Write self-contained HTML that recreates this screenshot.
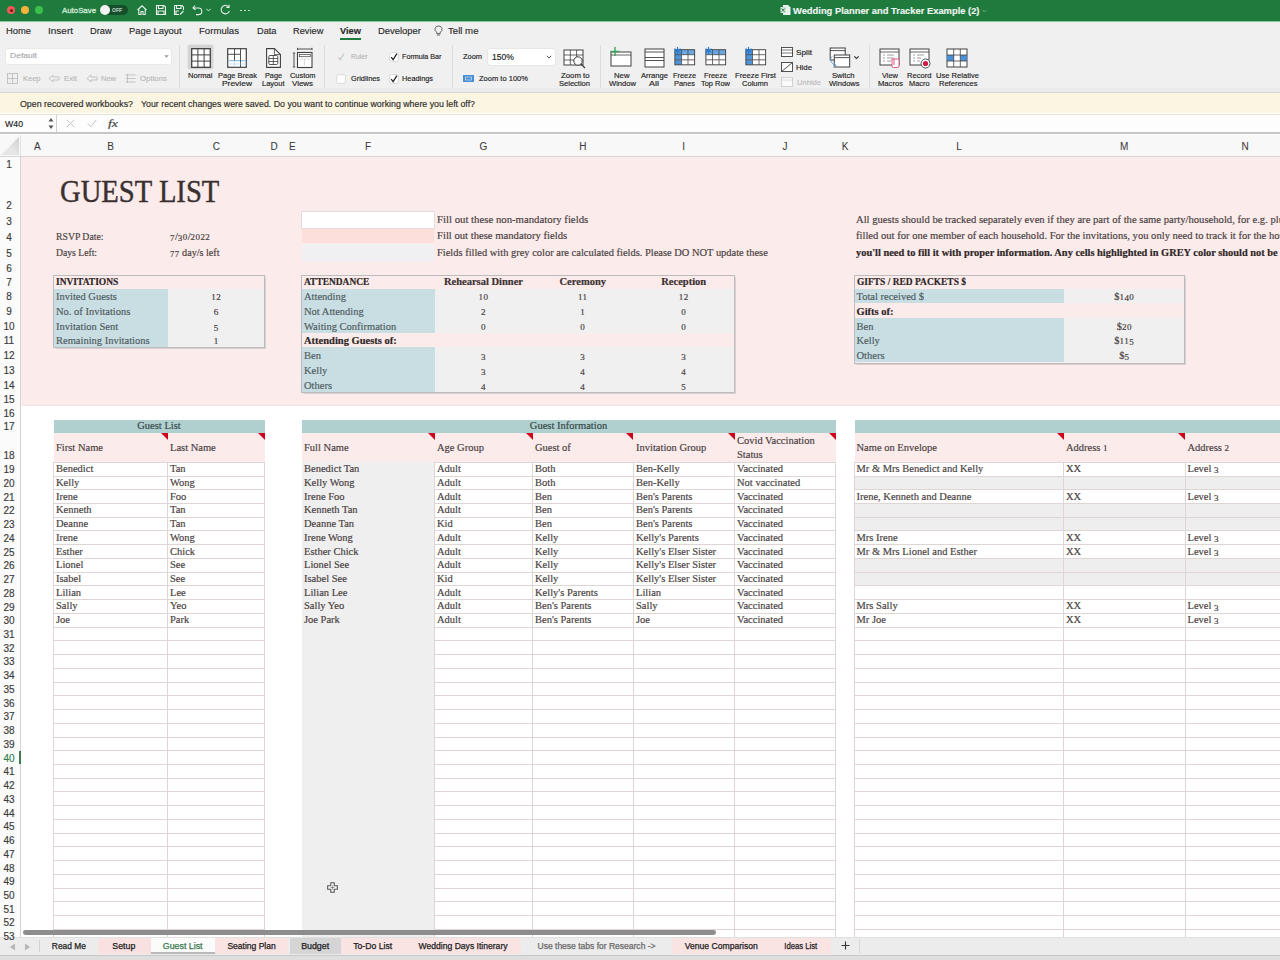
<!DOCTYPE html><html><head><meta charset="utf-8"><style>*{margin:0;padding:0;box-sizing:border-box}
html,body{width:1280px;height:960px;overflow:hidden;background:#fff;position:relative}
.a{position:absolute}
.t{position:absolute;white-space:nowrap}
svg{position:absolute;overflow:visible}
.o{font-size:0.86em;letter-spacing:0.05em}
.oa{font-size:0.88em;letter-spacing:0.03em}
.od{font-size:0.86em;letter-spacing:0.05em;position:relative;top:0.12em}
</style></head><body><div class="a" style="left:0.00px;top:0.00px;width:1280.00px;height:21.00px;background:#1f7a3e;"></div><div class="a" style="left:0.00px;top:21.00px;width:1280.00px;height:1.00px;background:#8cc79c;"></div><div class="a" style="left:7px;top:6px;width:8px;height:8px;border-radius:50%;background:#ee5a5a"></div><div class="a" style="left:21px;top:6px;width:8px;height:8px;border-radius:50%;background:#f6b33a"></div><div class="a" style="left:35px;top:6px;width:8px;height:8px;border-radius:50%;background:#3bc14a"></div><div class="a" style="left:9.5px;top:8.5px;width:3px;height:3px;border-radius:50%;background:#7a1010"></div><div class="a" style="left:100px;top:5px;width:28px;height:10px;border-radius:5px;background:#154f2b"></div><div class="a" style="left:100px;top:5px;width:10px;height:10px;border-radius:50%;background:#f4f4f4"></div><svg style="left:136px;top:4px" width="12" height="12" viewBox="0 0 12 12"><path d="M1.5 6 L6 1.8 L10.5 6 M2.8 4.8 V10.5 H5 V7.5 H7 V10.5 H9.2 V4.8" fill="none" stroke="#e6efe8" stroke-width="1.1"/></svg><svg style="left:155px;top:4px" width="12" height="12" viewBox="0 0 12 12"><path d="M1.5 1.5 H9 L10.5 3 V10.5 H1.5 Z M3.5 1.5 V4.5 H8 V1.5 M3 10.5 V7 H9 V10.5" fill="none" stroke="#e6efe8" stroke-width="1.1"/></svg><svg style="left:173px;top:4px" width="12" height="12" viewBox="0 0 12 12"><path d="M1.5 1.5 H9 L10.5 3 V6 M1.5 1.5 V10.5 H6 M3.5 1.5 V4.5 H8 V1.5 M3 10.5 V7 H6 M7 10.5 L10.5 7" fill="none" stroke="#e6efe8" stroke-width="1.1"/></svg><svg style="left:192px;top:4px" width="12" height="12" viewBox="0 0 12 12"><path d="M3 1.5 L1 4 L3.5 5.8 M1.3 4 H6.5 A3.3 3.3 0 0 1 6.5 10.6 H4" fill="none" stroke="#e6efe8" stroke-width="1.1"/></svg><svg style="left:206px;top:8px" width="5" height="4" viewBox="0 0 5 4"><path d="M0.5 0.8 L2.5 3 L4.5 0.8" fill="none" stroke="#e6efe8" stroke-width="0.9"/></svg><svg style="left:219px;top:4px" width="12" height="12" viewBox="0 0 12 12"><path d="M9.8 3.2 A4.2 4.2 0 1 0 10.4 6.8 M10 0.8 V3.5 H7.3" fill="none" stroke="#e6efe8" stroke-width="1.1"/></svg><div class="a" style="left:240px;top:9.5px;width:1.8px;height:1.8px;border-radius:50%;background:#e6efe8"></div><div class="a" style="left:244px;top:9.5px;width:1.8px;height:1.8px;border-radius:50%;background:#e6efe8"></div><div class="a" style="left:248px;top:9.5px;width:1.8px;height:1.8px;border-radius:50%;background:#e6efe8"></div><svg style="left:780px;top:4px" width="11" height="12" viewBox="0 0 11 12"><path d="M3 1 H8 L10.5 3.5 V11 H3 Z" fill="#e9f2ec"/><rect x="0.5" y="3" width="5.5" height="6" fill="#cfe3d5"/><path d="M1.8 4.5 L4.6 7.6 M4.6 4.5 L1.8 7.6" stroke="#1f7a3e" stroke-width="0.9"/></svg><svg style="left:982px;top:9px" width="5" height="4" viewBox="0 0 5 4"><path d="M0.5 0.8 L2.5 3 L4.5 0.8" fill="none" stroke="#7fb08e" stroke-width="0.8"/></svg><div class="a" style="left:0.00px;top:22.00px;width:1280.00px;height:66.00px;background:#f0f0f0;"></div><div class="a" style="left:0.00px;top:88.00px;width:1280.00px;height:4.30px;background:#ebebee;"></div><div class="a" style="left:0.00px;top:92.30px;width:1280.00px;height:1.00px;background:#d8d8d2;"></div><div class="a" style="left:340.00px;top:37.50px;width:21.00px;height:2.00px;background:#1f7a3e;"></div><svg style="left:434px;top:25px" width="9" height="12" viewBox="0 0 9 12"><path d="M4.5 1 A3.3 3.3 0 0 1 6.3 7.2 V8.6 H2.7 V7.2 A3.3 3.3 0 0 1 4.5 1 Z M3 10 H6" fill="none" stroke="#555" stroke-width="0.9"/></svg><div class="a" style="left:6px;top:48.5px;width:165px;height:15px;background:#fff;border-radius:2px;box-shadow:0 0 0 0.5px #e2e2e2"></div><svg style="left:164px;top:55px" width="5" height="3" viewBox="0 0 5 3"><path d="M0.3 0.3 L2.5 2.7 L4.7 0.3 Z" fill="#9a9a9a"/></svg><svg style="left:7px;top:73px" width="11" height="11" viewBox="0 0 11 11"><rect x="0.5" y="0.5" width="10" height="10" fill="none" stroke="#b9b9b9" stroke-width="0.8"/><path d="M0.5 5.5 H10.5 M5.5 0.5 V10.5" stroke="#b9b9b9" stroke-width="0.8"/></svg><svg style="left:48px;top:74px" width="12" height="9" viewBox="0 0 12 9"><path d="M1 4.5 L5 1 V3 H11 V6 H5 V8 Z" fill="none" stroke="#b9b9b9" stroke-width="0.8"/></svg><svg style="left:86px;top:74px" width="12" height="9" viewBox="0 0 12 9"><path d="M1 4.5 L5 1 V3 H11 V6 H5 V8 Z" fill="none" stroke="#b9b9b9" stroke-width="0.8"/></svg><svg style="left:125px;top:74px" width="11" height="9" viewBox="0 0 11 9"><path d="M0.5 1 H10.5 M0.5 4.5 H10.5 M0.5 8 H10.5 M2.5 0 V9" stroke="#b9b9b9" stroke-width="0.8"/></svg><div class="a" style="left:179.00px;top:45.00px;width:1.00px;height:43.00px;background:#dcdcdc;"></div><div class="a" style="left:188.2px;top:45.2px;width:25px;height:24px;background:#d4d4d4;border-radius:2px;box-shadow:0 0 1.5px #bbb"></div><svg style="left:191px;top:48px" width="20" height="20" viewBox="0 0 20 20"><rect x="0.7" y="0.7" width="18.6" height="18.6" fill="#fff" stroke="#404040" stroke-width="1.3"/><path d="M6.9 0.7 V19.3 M13.1 0.7 V19.3 M0.7 6.9 H19.3 M0.7 13.1 H19.3" stroke="#404040" stroke-width="1"/></svg><svg style="left:227px;top:48px" width="20" height="20" viewBox="0 0 20 20"><rect x="0.7" y="0.7" width="18.6" height="18.6" fill="#fff" stroke="#404040" stroke-width="1.2"/><path d="M0.7 12.7 H19.3" stroke="#7fb6e0" stroke-width="1"/><path d="M7.5 0.7 V12.7 M0.7 6.3 H13.5 M13.5 0.7 V19.3" stroke="#404040" stroke-width="0.9"/><path d="M7.5 12.7 V19.3 M0.7 16 H19.3" stroke="#a8d0ee" stroke-width="0.6"/></svg><svg style="left:266px;top:48px" width="15" height="20" viewBox="0 0 15 20"><path d="M0.6 0.6 H8.4 L14.4 6.6 V19.4 H0.6 Z" fill="#fff" stroke="#404040" stroke-width="1.1"/><path d="M8.4 0.6 V6.6 H14.4" fill="none" stroke="#404040" stroke-width="0.8"/><rect x="2.8" y="7.5" width="9" height="9" rx="1.2" fill="none" stroke="#404040" stroke-width="0.9"/><path d="M2.8 10.5 H11.8 M2.8 13.5 H11.8 M7.3 7.5 V16.5" stroke="#404040" stroke-width="0.8"/></svg><svg style="left:292px;top:47px" width="22" height="22" viewBox="0 0 22 22"><path d="M2 6 V20 M0.8 6 H3.2 M0.8 20 H3.2 M5.5 2 H20 M5.5 0.8 V3.2 M20 0.8 V3.2" stroke="#404040" stroke-width="0.9"/><rect x="5.5" y="5.5" width="14.5" height="15" fill="#fff" stroke="#404040" stroke-width="1.1"/><rect x="7.3" y="7.5" width="11" height="2.2" fill="none" stroke="#404040" stroke-width="0.7"/><path d="M7.5 12 H18 M12.5 12 V18.5" stroke="#bbb" stroke-width="0.5"/></svg><div class="a" style="left:324.00px;top:45.00px;width:1.00px;height:43.00px;background:#dcdcdc;"></div><svg style="left:335.5px;top:51.5px" width="10" height="10" viewBox="0 0 10 10"><path d="M2.2 5.2 L4.1 7.6 L7.9 1.6" fill="none" stroke="#c8c8c8" stroke-width="1.2"/></svg><svg style="left:388.5px;top:51.5px" width="10" height="10" viewBox="0 0 10 10"><rect x="0.6" y="0.6" width="8.8" height="8.8" rx="1.6" fill="#fdfdfd" stroke="#d0d0d0" stroke-width="0.7"/><path d="M2.2 5.2 L4.1 7.6 L7.9 1.6" fill="none" stroke="#222" stroke-width="1.2"/></svg><svg style="left:335.5px;top:73.5px" width="10" height="10" viewBox="0 0 10 10"><rect x="0.6" y="0.6" width="8.8" height="8.8" rx="1.6" fill="#fdfdfd" stroke="#d0d0d0" stroke-width="0.7"/></svg><svg style="left:388.5px;top:73.5px" width="10" height="10" viewBox="0 0 10 10"><rect x="0.6" y="0.6" width="8.8" height="8.8" rx="1.6" fill="#fdfdfd" stroke="#d0d0d0" stroke-width="0.7"/><path d="M2.2 5.2 L4.1 7.6 L7.9 1.6" fill="none" stroke="#222" stroke-width="1.2"/></svg><div class="a" style="left:452.00px;top:45.00px;width:1.00px;height:43.00px;background:#dcdcdc;"></div><div class="a" style="left:487.5px;top:48.5px;width:67.5px;height:16px;background:#fff;border-radius:2px;box-shadow:0 0 0 0.5px #dedede"></div><svg style="left:546px;top:55px" width="6" height="4" viewBox="0 0 6 4"><path d="M0.8 0.8 L3 3 L5.2 0.8" fill="none" stroke="#444" stroke-width="0.9"/></svg><svg style="left:463px;top:75px" width="11" height="7" viewBox="0 0 11 7"><rect x="0" y="0" width="11" height="7" fill="#4a90d6"/><rect x="2.5" y="2" width="6" height="3" fill="none" stroke="#cfe3f6" stroke-width="0.7"/></svg><svg style="left:563px;top:49px" width="24" height="20" viewBox="0 0 24 20"><rect x="1" y="1" width="19" height="15" fill="#fff" stroke="#404040" stroke-width="1"/><path d="M1 6 H20 M1 11 H20 M7.3 1 V16 M13.6 1 V16" stroke="#404040" stroke-width="0.8"/><circle cx="15" cy="12" r="4.2" fill="#fff" stroke="#404040" stroke-width="1"/><path d="M18 15 L22 19" stroke="#404040" stroke-width="1.3"/></svg><div class="a" style="left:599.50px;top:45.00px;width:1.00px;height:43.00px;background:#dcdcdc;"></div><svg style="left:610px;top:47px" width="22" height="20" viewBox="0 0 22 20"><rect x="1" y="5" width="20" height="14" fill="#fff" stroke="#404040" stroke-width="1"/><path d="M1 8 H21" stroke="#404040" stroke-width="0.8"/><path d="M5 0 V9 M0.5 4.5 H9.5" stroke="#3ba55c" stroke-width="1.4"/></svg><svg style="left:644px;top:48px" width="21" height="20" viewBox="0 0 21 20"><rect x="1" y="1" width="19" height="18" fill="#fff" stroke="#404040" stroke-width="1"/><path d="M1 4 H20 M1 9.5 H20 M1 12.5 H20" stroke="#404040" stroke-width="0.9"/></svg><svg style="left:673px;top:46px" width="24" height="22" viewBox="0 0 24 22"><rect x="1.9" y="3.7" width="19.7" height="15.1" fill="#fff"/><rect x="8.5" y="3.7" width="13.1" height="5" fill="#6aa8e4"/><rect x="1.9" y="3.7" width="6.6" height="15.1" fill="#4d94da"/><rect x="1.9" y="3.7" width="19.7" height="15.1" fill="none" stroke="#4a4a4a" stroke-width="1"/><path d="M1.9 8.7 H21.6 M1.9 13.8 H21.6 M8.5 3.7 V18.8 M15 3.7 V18.8" stroke="#4a4a4a" stroke-width="0.8"/><path d="M1.9 13.8 H21.6" stroke="#b48a8a" stroke-width="0.5" opacity="0.5"/><path d="M4.5 1 V8.2 M1.4 2.8 L7.6 6.4 M1.4 6.4 L7.6 2.8" stroke="#2a7bd0" stroke-width="1.2"/></svg><svg style="left:703.5px;top:46px" width="24" height="22" viewBox="0 0 24 22"><rect x="1.9" y="3.7" width="19.7" height="15.1" fill="#fff"/><rect x="1.9" y="3.7" width="19.7" height="5" fill="#6aa8e4"/><rect x="1.9" y="3.7" width="19.7" height="15.1" fill="none" stroke="#4a4a4a" stroke-width="1"/><path d="M1.9 8.7 H21.6 M1.9 13.8 H21.6 M8.5 3.7 V18.8 M15 3.7 V18.8" stroke="#4a4a4a" stroke-width="0.8"/><path d="M1.9 13.8 H21.6" stroke="#b48a8a" stroke-width="0.5" opacity="0.5"/><path d="M4.5 1 V8.2 M1.4 2.8 L7.6 6.4 M1.4 6.4 L7.6 2.8" stroke="#2a7bd0" stroke-width="1.2"/></svg><svg style="left:744px;top:46px" width="24" height="22" viewBox="0 0 24 22"><rect x="1.9" y="3.7" width="19.7" height="15.1" fill="#fff"/><rect x="1.9" y="3.7" width="6.6" height="15.1" fill="#4d94da"/><rect x="1.9" y="3.7" width="19.7" height="15.1" fill="none" stroke="#4a4a4a" stroke-width="1"/><path d="M1.9 8.7 H21.6 M1.9 13.8 H21.6 M8.5 3.7 V18.8 M15 3.7 V18.8" stroke="#4a4a4a" stroke-width="0.8"/><path d="M1.9 13.8 H21.6" stroke="#b48a8a" stroke-width="0.5" opacity="0.5"/><path d="M4.5 1 V8.2 M1.4 2.8 L7.6 6.4 M1.4 6.4 L7.6 2.8" stroke="#2a7bd0" stroke-width="1.2"/></svg><svg style="left:781px;top:47px" width="12" height="10" viewBox="0 0 12 10"><rect x="0.5" y="0.5" width="11" height="9" fill="#fff" stroke="#404040" stroke-width="0.9"/><path d="M0.5 3 H11.5 M0.5 6 H11.5" stroke="#404040" stroke-width="0.7"/></svg><svg style="left:781px;top:62px" width="12" height="10" viewBox="0 0 12 10"><rect x="0.5" y="0.5" width="11" height="9" fill="#fff" stroke="#404040" stroke-width="0.9"/><path d="M0.5 9.5 L11.5 0.5" stroke="#404040" stroke-width="0.9"/></svg><svg style="left:781px;top:77px" width="12" height="10" viewBox="0 0 12 10"><rect x="0.5" y="0.5" width="11" height="9" fill="#fbfbfb" stroke="#cccccc" stroke-width="0.9"/><path d="M0.5 3 H11.5" stroke="#cccccc" stroke-width="0.7"/></svg><svg style="left:828px;top:46px" width="32" height="22" viewBox="0 0 32 22"><rect x="2.2" y="2" width="15" height="12" fill="#fff" stroke="#404040" stroke-width="1"/><path d="M2.2 4.6 H17.2" stroke="#404040" stroke-width="0.9"/><rect x="6.3" y="9" width="15.4" height="12" fill="#fff" stroke="#404040" stroke-width="1"/><path d="M6.3 11.6 H21.7" stroke="#404040" stroke-width="0.9"/><path d="M4.2 10.5 C1.6 12.5 2.2 17.5 7.8 19.5 M6.2 17.3 L8 19.6 L5.6 21" fill="none" stroke="#6b9cc8" stroke-width="1"/><path d="M26.3 10.3 L28.5 12.5 L30.7 10.3" fill="none" stroke="#333" stroke-width="1.1"/></svg><div class="a" style="left:868.50px;top:45.00px;width:1.00px;height:43.00px;background:#dcdcdc;"></div><svg style="left:879px;top:48px" width="22" height="20" viewBox="0 0 22 20"><rect x="1" y="1" width="19" height="16" fill="#fff" stroke="#404040" stroke-width="1"/><path d="M1 4 H20" stroke="#404040" stroke-width="0.8"/><path d="M4 7 H6 M8 7 H15 M4 10 H6 M8 10 H15 M4 13 H6 M8 13 H12" stroke="#777" stroke-width="0.7"/><path d="M13 11 H20 V18 A1.5 1.5 0 0 1 18.5 19.5 H14.5 A1.5 1.5 0 0 1 13 18 Z M15 11 V17" fill="#fff" stroke="#d9477a" stroke-width="0.9"/></svg><svg style="left:909px;top:48px" width="22" height="21" viewBox="0 0 22 21"><rect x="1" y="1" width="19" height="16" fill="#fff" stroke="#404040" stroke-width="1"/><path d="M1 4 H20" stroke="#404040" stroke-width="0.8"/><path d="M4 7 H6 M8 7 H15 M4 10 H6 M8 10 H12 M4 13 H6 M8 13 H11" stroke="#777" stroke-width="0.7"/><circle cx="16.5" cy="15.5" r="4.5" fill="#fff" stroke="#404040" stroke-width="0.9"/><circle cx="16.5" cy="15.5" r="2.6" fill="#d11a4a"/></svg><svg style="left:946px;top:47.5px" width="22" height="20" viewBox="0 0 22 20"><rect x="1" y="1" width="20" height="18" fill="#fff" stroke="#404040" stroke-width="1"/><rect x="1" y="7" width="6.7" height="6" fill="#4a90d6"/><rect x="14.3" y="7" width="6.7" height="6" fill="#4a90d6"/><path d="M1 7 H21 M1 13 H21 M7.7 1 V19 M14.3 1 V19" stroke="#404040" stroke-width="0.8"/></svg><div class="a" style="left:0.00px;top:93.30px;width:1280.00px;height:20.20px;background:#fcf5e2;"></div><div class="a" style="left:0.00px;top:113.50px;width:1280.00px;height:1.00px;background:#e3e2d2;"></div><div class="a" style="left:0.00px;top:114.50px;width:1280.00px;height:18.00px;background:#fdfdfd;"></div><div class="a" style="left:0.00px;top:132.30px;width:1280.00px;height:2.20px;background:#c6c6c6;"></div><div class="a" style="left:56.00px;top:114.50px;width:1.00px;height:18.00px;background:#d0d0d0;"></div><svg style="left:48px;top:117px" width="6" height="13" viewBox="0 0 6 13"><path d="M0.5 4.5 L3 1 L5.5 4.5 Z M0.5 8.5 L3 12 L5.5 8.5 Z" fill="#555"/></svg><svg style="left:66px;top:119px" width="9" height="9" viewBox="0 0 9 9"><path d="M0.8 0.8 L8.2 8.2 M8.2 0.8 L0.8 8.2" stroke="#c4c4c4" stroke-width="1"/></svg><svg style="left:86.5px;top:119px" width="10" height="9" viewBox="0 0 10 9"><path d="M0.8 4.5 L3.8 7.8 L9.2 1" fill="none" stroke="#c4c4c4" stroke-width="1"/></svg><div class="a" style="left:0.00px;top:134.50px;width:1280.00px;height:21.00px;background:#f8f8f8;"></div><svg style="left:0px;top:134.5px" width="20" height="21" viewBox="0 0 20 21"><defs><linearGradient id="sg" x1="0" y1="1" x2="1" y2="0"><stop offset="0.45" stop-color="#e6e6e6"/><stop offset="1" stop-color="#cfcfcf"/></linearGradient></defs><path d="M1 20 L19 2 V20 Z" fill="url(#sg)"/></svg><div class="a" style="left:20.00px;top:134.50px;width:1.00px;height:21.00px;background:#e2e2e2;"></div><div class="a" style="left:21.00px;top:155.50px;width:1259.00px;height:781.50px;background:#ffffff;"></div><div class="a" style="left:21.00px;top:155.50px;width:1259.00px;height:250.00px;background:#fbebeb;"></div><div class="a" style="left:21.00px;top:404.50px;width:1259.00px;height:1.20px;background:#f6e2e2;"></div><div class="a" style="left:302.00px;top:212.00px;width:131.50px;height:16.00px;background:#ffffff;box-shadow:0 0 0 0.8px #e2d6d6"></div><div class="a" style="left:302.00px;top:228.50px;width:131.50px;height:14.50px;background:#fcdfda;"></div><div class="a" style="left:302.00px;top:244.00px;width:131.50px;height:18.00px;background:#f0eff2;"></div><div class="a" style="left:53.50px;top:288.50px;width:211.50px;height:58.80px;background:#f0f0f0;"></div><div class="a" style="left:53.50px;top:288.50px;width:114.00px;height:58.80px;background:#c9dee3;"></div><div class="a" style="left:53.00px;top:274.50px;width:212.00px;height:73.50px;border:1px solid #b9bdbd;box-shadow:0.5px 0.5px 1px rgba(0,0,0,0.12)"></div><div class="a" style="left:301.50px;top:288.50px;width:433.00px;height:44.10px;background:#f0f0f0;"></div><div class="a" style="left:301.50px;top:288.50px;width:133.00px;height:44.10px;background:#c9dee3;"></div><div class="a" style="left:301.50px;top:347.30px;width:433.00px;height:45.00px;background:#f0f0f0;"></div><div class="a" style="left:301.50px;top:347.30px;width:133.00px;height:45.00px;background:#c9dee3;"></div><div class="a" style="left:301.00px;top:274.50px;width:434.00px;height:118.30px;border:1px solid #b9bdbd;box-shadow:0.5px 0.5px 1px rgba(0,0,0,0.12)"></div><div class="a" style="left:854.50px;top:288.50px;width:330.50px;height:14.70px;background:#f0f0f0;"></div><div class="a" style="left:854.50px;top:288.50px;width:209.00px;height:14.70px;background:#c9dee3;"></div><div class="a" style="left:854.50px;top:317.90px;width:330.50px;height:44.40px;background:#f0f0f0;"></div><div class="a" style="left:854.50px;top:317.90px;width:209.00px;height:44.40px;background:#c9dee3;"></div><div class="a" style="left:854.00px;top:274.50px;width:331.00px;height:89.00px;border:1px solid #b9bdbd;box-shadow:0.5px 0.5px 1px rgba(0,0,0,0.12)"></div><div class="a" style="left:53.50px;top:419.80px;width:211.00px;height:13.20px;background:#b0cfcf;"></div><div class="a" style="left:301.50px;top:419.80px;width:534.00px;height:13.20px;background:#b0cfcf;"></div><div class="a" style="left:854.50px;top:419.80px;width:425.50px;height:13.20px;background:#b0cfcf;"></div><div class="a" style="left:53.50px;top:433.00px;width:211.00px;height:29.30px;background:#fcebeb;"></div><div class="a" style="left:301.50px;top:433.00px;width:534.00px;height:29.30px;background:#fcebeb;"></div><div class="a" style="left:854.50px;top:433.00px;width:425.50px;height:29.30px;background:#fcebeb;"></div><svg style="left:160.50px;top:433.30px" width="7" height="7" viewBox="0 0 7 7"><path d="M0 0 H7 V7 Z" fill="#d0021b"/></svg><svg style="left:257.50px;top:433.30px" width="7" height="7" viewBox="0 0 7 7"><path d="M0 0 H7 V7 Z" fill="#d0021b"/></svg><svg style="left:427.50px;top:433.30px" width="7" height="7" viewBox="0 0 7 7"><path d="M0 0 H7 V7 Z" fill="#d0021b"/></svg><svg style="left:525.50px;top:433.30px" width="7" height="7" viewBox="0 0 7 7"><path d="M0 0 H7 V7 Z" fill="#d0021b"/></svg><svg style="left:626.00px;top:433.30px" width="7" height="7" viewBox="0 0 7 7"><path d="M0 0 H7 V7 Z" fill="#d0021b"/></svg><svg style="left:727.50px;top:433.30px" width="7" height="7" viewBox="0 0 7 7"><path d="M0 0 H7 V7 Z" fill="#d0021b"/></svg><svg style="left:828.50px;top:433.30px" width="7" height="7" viewBox="0 0 7 7"><path d="M0 0 H7 V7 Z" fill="#d0021b"/></svg><svg style="left:1056.50px;top:433.30px" width="7" height="7" viewBox="0 0 7 7"><path d="M0 0 H7 V7 Z" fill="#d0021b"/></svg><svg style="left:1178.00px;top:433.30px" width="7" height="7" viewBox="0 0 7 7"><path d="M0 0 H7 V7 Z" fill="#d0021b"/></svg><div class="a" style="left:301.50px;top:462.30px;width:133.00px;height:474.70px;background:#efefef;"></div><div class="a" style="left:854.50px;top:476.04px;width:425.50px;height:13.74px;background:#eeeeee;"></div><div class="a" style="left:854.50px;top:503.51px;width:425.50px;height:13.74px;background:#eeeeee;"></div><div class="a" style="left:854.50px;top:517.24px;width:425.50px;height:13.74px;background:#eeeeee;"></div><div class="a" style="left:854.50px;top:558.45px;width:425.50px;height:13.74px;background:#eeeeee;"></div><div class="a" style="left:854.50px;top:572.19px;width:425.50px;height:13.74px;background:#eeeeee;"></div><div class="a" style="left:53.50px;top:461.80px;width:211.00px;height:1.00px;background:#e0d5d5;"></div><div class="a" style="left:434.50px;top:461.80px;width:401.00px;height:1.00px;background:#e0d5d5;"></div><div class="a" style="left:854.50px;top:461.80px;width:425.50px;height:1.00px;background:#e0d5d5;"></div><div class="a" style="left:53.50px;top:475.54px;width:211.00px;height:1.00px;background:#e0d5d5;"></div><div class="a" style="left:434.50px;top:475.54px;width:401.00px;height:1.00px;background:#e0d5d5;"></div><div class="a" style="left:854.50px;top:475.54px;width:425.50px;height:1.00px;background:#e0d5d5;"></div><div class="a" style="left:53.50px;top:489.27px;width:211.00px;height:1.00px;background:#e0d5d5;"></div><div class="a" style="left:434.50px;top:489.27px;width:401.00px;height:1.00px;background:#e0d5d5;"></div><div class="a" style="left:854.50px;top:489.27px;width:425.50px;height:1.00px;background:#e0d5d5;"></div><div class="a" style="left:53.50px;top:503.01px;width:211.00px;height:1.00px;background:#e0d5d5;"></div><div class="a" style="left:434.50px;top:503.01px;width:401.00px;height:1.00px;background:#e0d5d5;"></div><div class="a" style="left:854.50px;top:503.01px;width:425.50px;height:1.00px;background:#e0d5d5;"></div><div class="a" style="left:53.50px;top:516.74px;width:211.00px;height:1.00px;background:#e0d5d5;"></div><div class="a" style="left:434.50px;top:516.74px;width:401.00px;height:1.00px;background:#e0d5d5;"></div><div class="a" style="left:854.50px;top:516.74px;width:425.50px;height:1.00px;background:#e0d5d5;"></div><div class="a" style="left:53.50px;top:530.48px;width:211.00px;height:1.00px;background:#e0d5d5;"></div><div class="a" style="left:434.50px;top:530.48px;width:401.00px;height:1.00px;background:#e0d5d5;"></div><div class="a" style="left:854.50px;top:530.48px;width:425.50px;height:1.00px;background:#e0d5d5;"></div><div class="a" style="left:53.50px;top:544.22px;width:211.00px;height:1.00px;background:#e0d5d5;"></div><div class="a" style="left:434.50px;top:544.22px;width:401.00px;height:1.00px;background:#e0d5d5;"></div><div class="a" style="left:854.50px;top:544.22px;width:425.50px;height:1.00px;background:#e0d5d5;"></div><div class="a" style="left:53.50px;top:557.95px;width:211.00px;height:1.00px;background:#e0d5d5;"></div><div class="a" style="left:434.50px;top:557.95px;width:401.00px;height:1.00px;background:#e0d5d5;"></div><div class="a" style="left:854.50px;top:557.95px;width:425.50px;height:1.00px;background:#e0d5d5;"></div><div class="a" style="left:53.50px;top:571.69px;width:211.00px;height:1.00px;background:#e0d5d5;"></div><div class="a" style="left:434.50px;top:571.69px;width:401.00px;height:1.00px;background:#e0d5d5;"></div><div class="a" style="left:854.50px;top:571.69px;width:425.50px;height:1.00px;background:#e0d5d5;"></div><div class="a" style="left:53.50px;top:585.42px;width:211.00px;height:1.00px;background:#e0d5d5;"></div><div class="a" style="left:434.50px;top:585.42px;width:401.00px;height:1.00px;background:#e0d5d5;"></div><div class="a" style="left:854.50px;top:585.42px;width:425.50px;height:1.00px;background:#e0d5d5;"></div><div class="a" style="left:53.50px;top:599.16px;width:211.00px;height:1.00px;background:#e0d5d5;"></div><div class="a" style="left:434.50px;top:599.16px;width:401.00px;height:1.00px;background:#e0d5d5;"></div><div class="a" style="left:854.50px;top:599.16px;width:425.50px;height:1.00px;background:#e0d5d5;"></div><div class="a" style="left:53.50px;top:612.90px;width:211.00px;height:1.00px;background:#e0d5d5;"></div><div class="a" style="left:434.50px;top:612.90px;width:401.00px;height:1.00px;background:#e0d5d5;"></div><div class="a" style="left:854.50px;top:612.90px;width:425.50px;height:1.00px;background:#e0d5d5;"></div><div class="a" style="left:53.50px;top:626.63px;width:211.00px;height:1.00px;background:#e0d5d5;"></div><div class="a" style="left:434.50px;top:626.63px;width:401.00px;height:1.00px;background:#e0d5d5;"></div><div class="a" style="left:854.50px;top:626.63px;width:425.50px;height:1.00px;background:#e0d5d5;"></div><div class="a" style="left:53.50px;top:640.37px;width:211.00px;height:1.00px;background:#e0d5d5;"></div><div class="a" style="left:434.50px;top:640.37px;width:401.00px;height:1.00px;background:#e0d5d5;"></div><div class="a" style="left:854.50px;top:640.37px;width:425.50px;height:1.00px;background:#e0d5d5;"></div><div class="a" style="left:53.50px;top:654.10px;width:211.00px;height:1.00px;background:#e0d5d5;"></div><div class="a" style="left:434.50px;top:654.10px;width:401.00px;height:1.00px;background:#e0d5d5;"></div><div class="a" style="left:854.50px;top:654.10px;width:425.50px;height:1.00px;background:#e0d5d5;"></div><div class="a" style="left:53.50px;top:667.84px;width:211.00px;height:1.00px;background:#e0d5d5;"></div><div class="a" style="left:434.50px;top:667.84px;width:401.00px;height:1.00px;background:#e0d5d5;"></div><div class="a" style="left:854.50px;top:667.84px;width:425.50px;height:1.00px;background:#e0d5d5;"></div><div class="a" style="left:53.50px;top:681.58px;width:211.00px;height:1.00px;background:#e0d5d5;"></div><div class="a" style="left:434.50px;top:681.58px;width:401.00px;height:1.00px;background:#e0d5d5;"></div><div class="a" style="left:854.50px;top:681.58px;width:425.50px;height:1.00px;background:#e0d5d5;"></div><div class="a" style="left:53.50px;top:695.31px;width:211.00px;height:1.00px;background:#e0d5d5;"></div><div class="a" style="left:434.50px;top:695.31px;width:401.00px;height:1.00px;background:#e0d5d5;"></div><div class="a" style="left:854.50px;top:695.31px;width:425.50px;height:1.00px;background:#e0d5d5;"></div><div class="a" style="left:53.50px;top:709.05px;width:211.00px;height:1.00px;background:#e0d5d5;"></div><div class="a" style="left:434.50px;top:709.05px;width:401.00px;height:1.00px;background:#e0d5d5;"></div><div class="a" style="left:854.50px;top:709.05px;width:425.50px;height:1.00px;background:#e0d5d5;"></div><div class="a" style="left:53.50px;top:722.78px;width:211.00px;height:1.00px;background:#e0d5d5;"></div><div class="a" style="left:434.50px;top:722.78px;width:401.00px;height:1.00px;background:#e0d5d5;"></div><div class="a" style="left:854.50px;top:722.78px;width:425.50px;height:1.00px;background:#e0d5d5;"></div><div class="a" style="left:53.50px;top:736.52px;width:211.00px;height:1.00px;background:#e0d5d5;"></div><div class="a" style="left:434.50px;top:736.52px;width:401.00px;height:1.00px;background:#e0d5d5;"></div><div class="a" style="left:854.50px;top:736.52px;width:425.50px;height:1.00px;background:#e0d5d5;"></div><div class="a" style="left:53.50px;top:750.26px;width:211.00px;height:1.00px;background:#e0d5d5;"></div><div class="a" style="left:434.50px;top:750.26px;width:401.00px;height:1.00px;background:#e0d5d5;"></div><div class="a" style="left:854.50px;top:750.26px;width:425.50px;height:1.00px;background:#e0d5d5;"></div><div class="a" style="left:53.50px;top:763.99px;width:211.00px;height:1.00px;background:#e0d5d5;"></div><div class="a" style="left:434.50px;top:763.99px;width:401.00px;height:1.00px;background:#e0d5d5;"></div><div class="a" style="left:854.50px;top:763.99px;width:425.50px;height:1.00px;background:#e0d5d5;"></div><div class="a" style="left:53.50px;top:777.73px;width:211.00px;height:1.00px;background:#e0d5d5;"></div><div class="a" style="left:434.50px;top:777.73px;width:401.00px;height:1.00px;background:#e0d5d5;"></div><div class="a" style="left:854.50px;top:777.73px;width:425.50px;height:1.00px;background:#e0d5d5;"></div><div class="a" style="left:53.50px;top:791.46px;width:211.00px;height:1.00px;background:#e0d5d5;"></div><div class="a" style="left:434.50px;top:791.46px;width:401.00px;height:1.00px;background:#e0d5d5;"></div><div class="a" style="left:854.50px;top:791.46px;width:425.50px;height:1.00px;background:#e0d5d5;"></div><div class="a" style="left:53.50px;top:805.20px;width:211.00px;height:1.00px;background:#e0d5d5;"></div><div class="a" style="left:434.50px;top:805.20px;width:401.00px;height:1.00px;background:#e0d5d5;"></div><div class="a" style="left:854.50px;top:805.20px;width:425.50px;height:1.00px;background:#e0d5d5;"></div><div class="a" style="left:53.50px;top:818.94px;width:211.00px;height:1.00px;background:#e0d5d5;"></div><div class="a" style="left:434.50px;top:818.94px;width:401.00px;height:1.00px;background:#e0d5d5;"></div><div class="a" style="left:854.50px;top:818.94px;width:425.50px;height:1.00px;background:#e0d5d5;"></div><div class="a" style="left:53.50px;top:832.67px;width:211.00px;height:1.00px;background:#e0d5d5;"></div><div class="a" style="left:434.50px;top:832.67px;width:401.00px;height:1.00px;background:#e0d5d5;"></div><div class="a" style="left:854.50px;top:832.67px;width:425.50px;height:1.00px;background:#e0d5d5;"></div><div class="a" style="left:53.50px;top:846.41px;width:211.00px;height:1.00px;background:#e0d5d5;"></div><div class="a" style="left:434.50px;top:846.41px;width:401.00px;height:1.00px;background:#e0d5d5;"></div><div class="a" style="left:854.50px;top:846.41px;width:425.50px;height:1.00px;background:#e0d5d5;"></div><div class="a" style="left:53.50px;top:860.14px;width:211.00px;height:1.00px;background:#e0d5d5;"></div><div class="a" style="left:434.50px;top:860.14px;width:401.00px;height:1.00px;background:#e0d5d5;"></div><div class="a" style="left:854.50px;top:860.14px;width:425.50px;height:1.00px;background:#e0d5d5;"></div><div class="a" style="left:53.50px;top:873.88px;width:211.00px;height:1.00px;background:#e0d5d5;"></div><div class="a" style="left:434.50px;top:873.88px;width:401.00px;height:1.00px;background:#e0d5d5;"></div><div class="a" style="left:854.50px;top:873.88px;width:425.50px;height:1.00px;background:#e0d5d5;"></div><div class="a" style="left:53.50px;top:887.62px;width:211.00px;height:1.00px;background:#e0d5d5;"></div><div class="a" style="left:434.50px;top:887.62px;width:401.00px;height:1.00px;background:#e0d5d5;"></div><div class="a" style="left:854.50px;top:887.62px;width:425.50px;height:1.00px;background:#e0d5d5;"></div><div class="a" style="left:53.50px;top:901.35px;width:211.00px;height:1.00px;background:#e0d5d5;"></div><div class="a" style="left:434.50px;top:901.35px;width:401.00px;height:1.00px;background:#e0d5d5;"></div><div class="a" style="left:854.50px;top:901.35px;width:425.50px;height:1.00px;background:#e0d5d5;"></div><div class="a" style="left:53.50px;top:915.09px;width:211.00px;height:1.00px;background:#e0d5d5;"></div><div class="a" style="left:434.50px;top:915.09px;width:401.00px;height:1.00px;background:#e0d5d5;"></div><div class="a" style="left:854.50px;top:915.09px;width:425.50px;height:1.00px;background:#e0d5d5;"></div><div class="a" style="left:53.50px;top:928.82px;width:211.00px;height:1.00px;background:#e0d5d5;"></div><div class="a" style="left:434.50px;top:928.82px;width:401.00px;height:1.00px;background:#e0d5d5;"></div><div class="a" style="left:854.50px;top:928.82px;width:425.50px;height:1.00px;background:#e0d5d5;"></div><div class="a" style="left:53.00px;top:462.30px;width:1.00px;height:474.70px;background:#e0d5d5;"></div><div class="a" style="left:167.00px;top:462.30px;width:1.00px;height:474.70px;background:#e0d5d5;"></div><div class="a" style="left:264.00px;top:462.30px;width:1.00px;height:474.70px;background:#e0d5d5;"></div><div class="a" style="left:434.00px;top:462.30px;width:1.00px;height:474.70px;background:#e0d5d5;"></div><div class="a" style="left:532.00px;top:462.30px;width:1.00px;height:474.70px;background:#e0d5d5;"></div><div class="a" style="left:632.50px;top:462.30px;width:1.00px;height:474.70px;background:#e0d5d5;"></div><div class="a" style="left:734.00px;top:462.30px;width:1.00px;height:474.70px;background:#e0d5d5;"></div><div class="a" style="left:835.00px;top:462.30px;width:1.00px;height:474.70px;background:#e0d5d5;"></div><div class="a" style="left:854.00px;top:462.30px;width:1.00px;height:474.70px;background:#e0d5d5;"></div><div class="a" style="left:1063.00px;top:462.30px;width:1.00px;height:474.70px;background:#e0d5d5;"></div><div class="a" style="left:1184.50px;top:462.30px;width:1.00px;height:474.70px;background:#e0d5d5;"></div><div class="a" style="left:0.00px;top:155.50px;width:1280.00px;height:1.50px;background:#dcd3d6;"></div><div class="a" style="left:0.00px;top:157.00px;width:20.00px;height:780.00px;background:#fbfbfb;"></div><div class="a" style="left:20.00px;top:157.00px;width:1.00px;height:780.00px;background:#d4d4d4;"></div><div class="a" style="left:19.00px;top:750.76px;width:2.20px;height:13.74px;background:#3c7a58;"></div><div class="a" style="left:22.5px;top:930.2px;width:693px;height:4.8px;border-radius:2.4px;background:#8d8d8d"></div><div class="a" style="left:0.00px;top:937.00px;width:1280.00px;height:17.50px;background:#ececec;"></div><div class="a" style="left:0.00px;top:937.00px;width:1280.00px;height:0.80px;background:#e0e0e0;"></div><div class="a" style="left:0.00px;top:954.50px;width:1280.00px;height:1.00px;background:#c8c8c8;"></div><div class="a" style="left:0.00px;top:955.50px;width:1280.00px;height:4.50px;background:#dedede;"></div><svg style="left:9px;top:943px" width="7" height="8" viewBox="0 0 7 8"><path d="M6 0.5 L1 4 L6 7.5 Z" fill="#b6b6b6"/></svg><svg style="left:24px;top:943px" width="7" height="8" viewBox="0 0 7 8"><path d="M1 0.5 L6 4 L1 7.5 Z" fill="#b6b6b6"/></svg><div class="a" style="left:39.00px;top:940.00px;width:0.80px;height:12.00px;background:#d2d2d2;"></div><div class="a" style="left:40.00px;top:937.80px;width:57.50px;height:16.70px;background:#ececec;"></div><div class="a" style="left:97.50px;top:937.80px;width:53.50px;height:16.70px;background:#f9e1e1;"></div><div class="a" style="left:151.00px;top:937.80px;width:64.20px;height:16.70px;background:#fbfbfb;"></div><div class="a" style="left:215.20px;top:937.80px;width:72.80px;height:16.70px;background:#f9e3e3;"></div><div class="a" style="left:290.00px;top:937.80px;width:51.00px;height:16.70px;background:#d5d5d5;"></div><div class="a" style="left:341.00px;top:937.80px;width:64.00px;height:16.70px;background:#f9e3e3;"></div><div class="a" style="left:405.00px;top:937.80px;width:116.00px;height:16.70px;background:#f9e3e3;"></div><div class="a" style="left:521.00px;top:937.80px;width:151.00px;height:16.70px;background:#ececec;"></div><div class="a" style="left:672.00px;top:937.80px;width:98.00px;height:16.70px;background:#f9e3e3;"></div><div class="a" style="left:770.00px;top:937.80px;width:61.00px;height:16.70px;background:#f9e3e3;"></div><div class="a" style="left:151.00px;top:952.30px;width:64.20px;height:1.50px;background:#b8b8b8;"></div><svg style="left:326.5px;top:881.5px" width="11" height="11" viewBox="0 0 11 11"><path d="M3.8 0.7 H7.2 V3.8 H10.3 V7.2 H7.2 V10.3 H3.8 V7.2 H0.7 V3.8 H3.8 Z" fill="#fff" stroke="#555" stroke-width="1.1"/><path d="M5.5 3.5 V7.5 M3.5 5.5 H7.5" stroke="#555" stroke-width="0.6"/></svg><svg style="left:841px;top:941px" width="9" height="9" viewBox="0 0 9 9"><path d="M4.5 0.5 V8.5 M0.5 4.5 H8.5" stroke="#333" stroke-width="1.1"/></svg><div class="a" style="left:859.00px;top:939.00px;width:0.80px;height:14.00px;background:#d8d8d8;"></div><div class="t" style="top:7.07px;font-family:'Liberation Sans', sans-serif;font-size:7.6px;line-height:7.6px;color:#cfe8d4;-webkit-text-stroke:0.15px #cfe8d4;left:62.00px;-webkit-text-stroke:0.3px #cfe8d4;"><span style="display:inline-block;transform:scaleX(1.0323);transform-origin:left">AutoSave</span></div><div class="t" style="top:7.97px;font-family:'Liberation Sans', sans-serif;font-size:5px;line-height:5px;color:#b8c8bc;font-weight:700;-webkit-text-stroke:0.15px #b8c8bc;left:112.00px;">OFF</div><div class="t" style="top:6.44px;font-family:'Liberation Sans', sans-serif;font-size:9.4px;line-height:9.4px;color:#eef5f0;font-weight:700;-webkit-text-stroke:0.15px #eef5f0;left:793.00px;"><span style="display:inline-block;transform:scaleX(0.9980);transform-origin:left">Wedding Planner and Tracker Example (2)</span></div><div class="t" style="top:26.26px;font-family:'Liberation Sans', sans-serif;font-size:9.5px;line-height:9.5px;color:#2b2b2b;-webkit-text-stroke:0.15px #2b2b2b;left:5.50px;"><span style="display:inline-block;transform:scaleX(0.9864);transform-origin:left">Home</span></div><div class="t" style="top:26.26px;font-family:'Liberation Sans', sans-serif;font-size:9.5px;line-height:9.5px;color:#2b2b2b;-webkit-text-stroke:0.15px #2b2b2b;left:48.00px;"><span style="display:inline-block;transform:scaleX(1.0519);transform-origin:left">Insert</span></div><div class="t" style="top:26.26px;font-family:'Liberation Sans', sans-serif;font-size:9.5px;line-height:9.5px;color:#2b2b2b;-webkit-text-stroke:0.15px #2b2b2b;left:90.00px;"><span style="display:inline-block;transform:scaleX(0.9787);transform-origin:left">Draw</span></div><div class="t" style="top:26.26px;font-family:'Liberation Sans', sans-serif;font-size:9.5px;line-height:9.5px;color:#2b2b2b;-webkit-text-stroke:0.15px #2b2b2b;left:129.00px;"><span style="display:inline-block;transform:scaleX(0.9858);transform-origin:left">Page Layout</span></div><div class="t" style="top:26.26px;font-family:'Liberation Sans', sans-serif;font-size:9.5px;line-height:9.5px;color:#2b2b2b;-webkit-text-stroke:0.15px #2b2b2b;left:199.00px;"><span style="display:inline-block;transform:scaleX(1.0103);transform-origin:left">Formulas</span></div><div class="t" style="top:26.26px;font-family:'Liberation Sans', sans-serif;font-size:9.5px;line-height:9.5px;color:#2b2b2b;-webkit-text-stroke:0.15px #2b2b2b;left:256.60px;"><span style="display:inline-block;transform:scaleX(0.9662);transform-origin:left">Data</span></div><div class="t" style="top:26.26px;font-family:'Liberation Sans', sans-serif;font-size:9.5px;line-height:9.5px;color:#2b2b2b;-webkit-text-stroke:0.15px #2b2b2b;left:293.00px;"><span style="display:inline-block;transform:scaleX(0.9757);transform-origin:left">Review</span></div><div class="t" style="top:26.26px;font-family:'Liberation Sans', sans-serif;font-size:9.5px;line-height:9.5px;color:#2b2b2b;font-weight:700;-webkit-text-stroke:0.15px #2b2b2b;left:340.00px;"><span style="display:inline-block;transform:scaleX(0.9775);transform-origin:left">View</span></div><div class="t" style="top:26.26px;font-family:'Liberation Sans', sans-serif;font-size:9.5px;line-height:9.5px;color:#2b2b2b;-webkit-text-stroke:0.15px #2b2b2b;left:378.00px;"><span style="display:inline-block;transform:scaleX(0.9928);transform-origin:left">Developer</span></div><div class="t" style="top:26.26px;font-family:'Liberation Sans', sans-serif;font-size:9.5px;line-height:9.5px;color:#2b2b2b;-webkit-text-stroke:0.15px #2b2b2b;left:448.00px;"><span style="display:inline-block;transform:scaleX(1.0135);transform-origin:left">Tell me</span></div><div class="t" style="top:52.23px;font-family:'Liberation Sans', sans-serif;font-size:8px;line-height:8px;color:#a8a8a8;-webkit-text-stroke:0.15px #a8a8a8;left:9.50px;"><span style="display:inline-block;transform:scaleX(1.0647);transform-origin:left">Default</span></div><div class="t" style="top:75.07px;font-family:'Liberation Sans', sans-serif;font-size:7.6px;line-height:7.6px;color:#b9b9b9;-webkit-text-stroke:0.15px #b9b9b9;left:22.50px;"><span style="display:inline-block;transform:scaleX(0.9859);transform-origin:left">Keep</span></div><div class="t" style="top:75.07px;font-family:'Liberation Sans', sans-serif;font-size:7.6px;line-height:7.6px;color:#b9b9b9;-webkit-text-stroke:0.15px #b9b9b9;left:64.00px;"><span style="display:inline-block;transform:scaleX(1.0259);transform-origin:left">Exit</span></div><div class="t" style="top:75.07px;font-family:'Liberation Sans', sans-serif;font-size:7.6px;line-height:7.6px;color:#b9b9b9;-webkit-text-stroke:0.15px #b9b9b9;left:101.00px;"><span style="display:inline-block;transform:scaleX(0.9866);transform-origin:left">New</span></div><div class="t" style="top:75.07px;font-family:'Liberation Sans', sans-serif;font-size:7.6px;line-height:7.6px;color:#b9b9b9;-webkit-text-stroke:0.15px #b9b9b9;left:140.00px;"><span style="display:inline-block;transform:scaleX(1.0316);transform-origin:left">Options</span></div><div class="t" style="top:71.57px;font-family:'Liberation Sans', sans-serif;font-size:7.6px;line-height:7.6px;color:#222;-webkit-text-stroke:0.15px #222;left:188.00px;"><span style="display:inline-block;transform:scaleX(1.0006);transform-origin:left">Normal</span></div><div class="t" style="top:71.57px;font-family:'Liberation Sans', sans-serif;font-size:7.6px;line-height:7.6px;color:#222;-webkit-text-stroke:0.15px #222;left:218.00px;"><span style="display:inline-block;transform:scaleX(0.9827);transform-origin:left">Page Break</span></div><div class="t" style="top:80.07px;font-family:'Liberation Sans', sans-serif;font-size:7.6px;line-height:7.6px;color:#222;-webkit-text-stroke:0.15px #222;left:222.00px;"><span style="display:inline-block;transform:scaleX(1.1105);transform-origin:left">Preview</span></div><div class="t" style="top:71.57px;font-family:'Liberation Sans', sans-serif;font-size:7.6px;line-height:7.6px;color:#222;-webkit-text-stroke:0.15px #222;left:265.00px;"><span style="display:inline-block;transform:scaleX(0.9577);transform-origin:left">Page</span></div><div class="t" style="top:80.07px;font-family:'Liberation Sans', sans-serif;font-size:7.6px;line-height:7.6px;color:#222;-webkit-text-stroke:0.15px #222;left:262.00px;"><span style="display:inline-block;transform:scaleX(0.9863);transform-origin:left">Layout</span></div><div class="t" style="top:71.57px;font-family:'Liberation Sans', sans-serif;font-size:7.6px;line-height:7.6px;color:#222;-webkit-text-stroke:0.15px #222;left:290.00px;"><span style="display:inline-block;transform:scaleX(0.9743);transform-origin:left">Custom</span></div><div class="t" style="top:80.07px;font-family:'Liberation Sans', sans-serif;font-size:7.6px;line-height:7.6px;color:#222;-webkit-text-stroke:0.15px #222;left:292.00px;"><span style="display:inline-block;transform:scaleX(1.0435);transform-origin:left">Views</span></div><div class="t" style="top:53.07px;font-family:'Liberation Sans', sans-serif;font-size:7.6px;line-height:7.6px;color:#b5b5b5;-webkit-text-stroke:0.15px #b5b5b5;left:350.50px;"><span style="display:inline-block;transform:scaleX(0.9088);transform-origin:left">Ruler</span></div><div class="t" style="top:53.07px;font-family:'Liberation Sans', sans-serif;font-size:7.6px;line-height:7.6px;color:#222;-webkit-text-stroke:0.15px #222;left:402.00px;"><span style="display:inline-block;transform:scaleX(0.9454);transform-origin:left">Formula Bar</span></div><div class="t" style="top:75.07px;font-family:'Liberation Sans', sans-serif;font-size:7.6px;line-height:7.6px;color:#222;-webkit-text-stroke:0.15px #222;left:350.50px;"><span style="display:inline-block;transform:scaleX(0.9677);transform-origin:left">Gridlines</span></div><div class="t" style="top:75.07px;font-family:'Liberation Sans', sans-serif;font-size:7.6px;line-height:7.6px;color:#222;-webkit-text-stroke:0.15px #222;left:402.00px;"><span style="display:inline-block;transform:scaleX(0.9659);transform-origin:left">Headings</span></div><div class="t" style="top:53.07px;font-family:'Liberation Sans', sans-serif;font-size:7.6px;line-height:7.6px;color:#222;-webkit-text-stroke:0.15px #222;left:463.00px;"><span style="display:inline-block;transform:scaleX(0.9783);transform-origin:left">Zoom</span></div><div class="t" style="top:52.72px;font-family:'Liberation Sans', sans-serif;font-size:8.6px;line-height:8.6px;color:#222;-webkit-text-stroke:0.15px #222;left:491.50px;"><span style="display:inline-block;transform:scaleX(1.0007);transform-origin:left">150%</span></div><div class="t" style="top:75.07px;font-family:'Liberation Sans', sans-serif;font-size:7.6px;line-height:7.6px;color:#222;-webkit-text-stroke:0.15px #222;left:478.50px;"><span style="display:inline-block;transform:scaleX(0.9921);transform-origin:left">Zoom to 100%</span></div><div class="t" style="top:71.57px;font-family:'Liberation Sans', sans-serif;font-size:7.6px;line-height:7.6px;color:#222;-webkit-text-stroke:0.15px #222;left:560.50px;"><span style="display:inline-block;transform:scaleX(1.0230);transform-origin:left">Zoom to</span></div><div class="t" style="top:80.07px;font-family:'Liberation Sans', sans-serif;font-size:7.6px;line-height:7.6px;color:#222;-webkit-text-stroke:0.15px #222;left:559.00px;"><span style="display:inline-block;transform:scaleX(0.9920);transform-origin:left">Selection</span></div><div class="t" style="top:71.57px;font-family:'Liberation Sans', sans-serif;font-size:7.6px;line-height:7.6px;color:#222;-webkit-text-stroke:0.15px #222;left:614.00px;"><span style="display:inline-block;transform:scaleX(1.0195);transform-origin:left">New</span></div><div class="t" style="top:80.07px;font-family:'Liberation Sans', sans-serif;font-size:7.6px;line-height:7.6px;color:#222;-webkit-text-stroke:0.15px #222;left:608.50px;"><span style="display:inline-block;transform:scaleX(0.9994);transform-origin:left">Window</span></div><div class="t" style="top:71.57px;font-family:'Liberation Sans', sans-serif;font-size:7.6px;line-height:7.6px;color:#222;-webkit-text-stroke:0.15px #222;left:641.00px;"><span style="display:inline-block;transform:scaleX(0.9988);transform-origin:left">Arrange</span></div><div class="t" style="top:80.07px;font-family:'Liberation Sans', sans-serif;font-size:7.6px;line-height:7.6px;color:#222;-webkit-text-stroke:0.15px #222;left:649.00px;"><span style="display:inline-block;transform:scaleX(1.1830);transform-origin:left">All</span></div><div class="t" style="top:71.57px;font-family:'Liberation Sans', sans-serif;font-size:7.6px;line-height:7.6px;color:#222;-webkit-text-stroke:0.15px #222;left:673.00px;"><span style="display:inline-block;transform:scaleX(0.9729);transform-origin:left">Freeze</span></div><div class="t" style="top:80.07px;font-family:'Liberation Sans', sans-serif;font-size:7.6px;line-height:7.6px;color:#222;-webkit-text-stroke:0.15px #222;left:674.00px;"><span style="display:inline-block;transform:scaleX(0.9746);transform-origin:left">Panes</span></div><div class="t" style="top:71.57px;font-family:'Liberation Sans', sans-serif;font-size:7.6px;line-height:7.6px;color:#222;-webkit-text-stroke:0.15px #222;left:704.00px;"><span style="display:inline-block;transform:scaleX(0.9729);transform-origin:left">Freeze</span></div><div class="t" style="top:80.07px;font-family:'Liberation Sans', sans-serif;font-size:7.6px;line-height:7.6px;color:#222;-webkit-text-stroke:0.15px #222;left:701.00px;"><span style="display:inline-block;transform:scaleX(0.9815);transform-origin:left">Top Row</span></div><div class="t" style="top:71.57px;font-family:'Liberation Sans', sans-serif;font-size:7.6px;line-height:7.6px;color:#222;-webkit-text-stroke:0.15px #222;left:735.00px;"><span style="display:inline-block;transform:scaleX(1.0120);transform-origin:left">Freeze First</span></div><div class="t" style="top:80.07px;font-family:'Liberation Sans', sans-serif;font-size:7.6px;line-height:7.6px;color:#222;-webkit-text-stroke:0.15px #222;left:742.00px;"><span style="display:inline-block;transform:scaleX(0.9934);transform-origin:left">Column</span></div><div class="t" style="top:48.57px;font-family:'Liberation Sans', sans-serif;font-size:7.6px;line-height:7.6px;color:#222;-webkit-text-stroke:0.15px #222;left:796.00px;"><span style="display:inline-block;transform:scaleX(1.0825);transform-origin:left">Split</span></div><div class="t" style="top:64.07px;font-family:'Liberation Sans', sans-serif;font-size:7.6px;line-height:7.6px;color:#222;-webkit-text-stroke:0.15px #222;left:796.00px;"><span style="display:inline-block;transform:scaleX(1.0240);transform-origin:left">Hide</span></div><div class="t" style="top:79.07px;font-family:'Liberation Sans', sans-serif;font-size:7.6px;line-height:7.6px;color:#bdbdbd;-webkit-text-stroke:0.15px #bdbdbd;left:796.50px;"><span style="display:inline-block;transform:scaleX(0.9968);transform-origin:left">Unhide</span></div><div class="t" style="top:71.57px;font-family:'Liberation Sans', sans-serif;font-size:7.6px;line-height:7.6px;color:#222;-webkit-text-stroke:0.15px #222;left:832.00px;"><span style="display:inline-block;transform:scaleX(1.0056);transform-origin:left">Switch</span></div><div class="t" style="top:80.07px;font-family:'Liberation Sans', sans-serif;font-size:7.6px;line-height:7.6px;color:#222;-webkit-text-stroke:0.15px #222;left:829.00px;"><span style="display:inline-block;transform:scaleX(0.9899);transform-origin:left">Windows</span></div><div class="t" style="top:71.57px;font-family:'Liberation Sans', sans-serif;font-size:7.6px;line-height:7.6px;color:#222;-webkit-text-stroke:0.15px #222;left:882.00px;"><span style="display:inline-block;transform:scaleX(0.9799);transform-origin:left">View</span></div><div class="t" style="top:80.07px;font-family:'Liberation Sans', sans-serif;font-size:7.6px;line-height:7.6px;color:#222;-webkit-text-stroke:0.15px #222;left:877.50px;"><span style="display:inline-block;transform:scaleX(1.0038);transform-origin:left">Macros</span></div><div class="t" style="top:71.57px;font-family:'Liberation Sans', sans-serif;font-size:7.6px;line-height:7.6px;color:#222;-webkit-text-stroke:0.15px #222;left:907.00px;"><span style="display:inline-block;transform:scaleX(1.0006);transform-origin:left">Record</span></div><div class="t" style="top:80.07px;font-family:'Liberation Sans', sans-serif;font-size:7.6px;line-height:7.6px;color:#222;-webkit-text-stroke:0.15px #222;left:909.00px;"><span style="display:inline-block;transform:scaleX(0.9711);transform-origin:left">Macro</span></div><div class="t" style="top:71.57px;font-family:'Liberation Sans', sans-serif;font-size:7.6px;line-height:7.6px;color:#222;-webkit-text-stroke:0.15px #222;left:936.00px;"><span style="display:inline-block;transform:scaleX(0.9985);transform-origin:left">Use Relative</span></div><div class="t" style="top:80.07px;font-family:'Liberation Sans', sans-serif;font-size:7.6px;line-height:7.6px;color:#222;-webkit-text-stroke:0.15px #222;left:938.50px;"><span style="display:inline-block;transform:scaleX(0.9912);transform-origin:left">References</span></div><div class="t" style="top:99.55px;font-family:'Liberation Sans', sans-serif;font-size:8.8px;line-height:8.8px;color:#2a2a2a;-webkit-text-stroke:0.15px #2a2a2a;left:20.30px;"><span style="display:inline-block;transform:scaleX(1.0047);transform-origin:left">Open recovered workbooks?</span></div><div class="t" style="top:99.55px;font-family:'Liberation Sans', sans-serif;font-size:8.8px;line-height:8.8px;color:#2a2a2a;-webkit-text-stroke:0.15px #2a2a2a;left:141.00px;"><span style="display:inline-block;transform:scaleX(1.0000);transform-origin:left">Your recent changes were saved. Do you want to continue working where you left off?</span></div><div class="t" style="top:119.52px;font-family:'Liberation Sans', sans-serif;font-size:8.6px;line-height:8.6px;color:#222;-webkit-text-stroke:0.15px #222;left:5.20px;"><span style="display:inline-block;transform:scaleX(1.0186);transform-origin:left">W40</span></div><div class="t" style="top:119.31px;font-family:'Liberation Serif', serif;font-size:10.5px;line-height:10.5px;color:#444;font-style:italic;-webkit-text-stroke:0.18px #444;left:107.50px;"><span style="display:inline-block;transform:scaleX(1.3196);transform-origin:left">fx</span></div><div class="t" style="top:142.13px;font-family:'Liberation Sans', sans-serif;font-size:10px;line-height:10px;color:#3a3a3a;-webkit-text-stroke:0.15px #3a3a3a;left:21.00px;width:32.50px;text-align:center;-webkit-text-stroke:0.05px #3a3a3a;">A</div><div class="t" style="top:142.13px;font-family:'Liberation Sans', sans-serif;font-size:10px;line-height:10px;color:#3a3a3a;-webkit-text-stroke:0.15px #3a3a3a;left:53.50px;width:114.00px;text-align:center;-webkit-text-stroke:0.05px #3a3a3a;">B</div><div class="t" style="top:142.13px;font-family:'Liberation Sans', sans-serif;font-size:10px;line-height:10px;color:#3a3a3a;-webkit-text-stroke:0.15px #3a3a3a;left:167.50px;width:97.50px;text-align:center;-webkit-text-stroke:0.05px #3a3a3a;">C</div><div class="t" style="top:142.13px;font-family:'Liberation Sans', sans-serif;font-size:10px;line-height:10px;color:#3a3a3a;-webkit-text-stroke:0.15px #3a3a3a;left:265.00px;width:18.00px;text-align:center;-webkit-text-stroke:0.05px #3a3a3a;">D</div><div class="t" style="top:142.13px;font-family:'Liberation Sans', sans-serif;font-size:10px;line-height:10px;color:#3a3a3a;-webkit-text-stroke:0.15px #3a3a3a;left:283.00px;width:18.50px;text-align:center;-webkit-text-stroke:0.05px #3a3a3a;">E</div><div class="t" style="top:142.13px;font-family:'Liberation Sans', sans-serif;font-size:10px;line-height:10px;color:#3a3a3a;-webkit-text-stroke:0.15px #3a3a3a;left:301.50px;width:133.00px;text-align:center;-webkit-text-stroke:0.05px #3a3a3a;">F</div><div class="t" style="top:142.13px;font-family:'Liberation Sans', sans-serif;font-size:10px;line-height:10px;color:#3a3a3a;-webkit-text-stroke:0.15px #3a3a3a;left:434.50px;width:98.00px;text-align:center;-webkit-text-stroke:0.05px #3a3a3a;">G</div><div class="t" style="top:142.13px;font-family:'Liberation Sans', sans-serif;font-size:10px;line-height:10px;color:#3a3a3a;-webkit-text-stroke:0.15px #3a3a3a;left:532.50px;width:100.50px;text-align:center;-webkit-text-stroke:0.05px #3a3a3a;">H</div><div class="t" style="top:142.13px;font-family:'Liberation Sans', sans-serif;font-size:10px;line-height:10px;color:#3a3a3a;-webkit-text-stroke:0.15px #3a3a3a;left:633.00px;width:101.50px;text-align:center;-webkit-text-stroke:0.05px #3a3a3a;">I</div><div class="t" style="top:142.13px;font-family:'Liberation Sans', sans-serif;font-size:10px;line-height:10px;color:#3a3a3a;-webkit-text-stroke:0.15px #3a3a3a;left:734.50px;width:101.00px;text-align:center;-webkit-text-stroke:0.05px #3a3a3a;">J</div><div class="t" style="top:142.13px;font-family:'Liberation Sans', sans-serif;font-size:10px;line-height:10px;color:#3a3a3a;-webkit-text-stroke:0.15px #3a3a3a;left:835.50px;width:19.00px;text-align:center;-webkit-text-stroke:0.05px #3a3a3a;">K</div><div class="t" style="top:142.13px;font-family:'Liberation Sans', sans-serif;font-size:10px;line-height:10px;color:#3a3a3a;-webkit-text-stroke:0.15px #3a3a3a;left:854.50px;width:209.00px;text-align:center;-webkit-text-stroke:0.05px #3a3a3a;">L</div><div class="t" style="top:142.13px;font-family:'Liberation Sans', sans-serif;font-size:10px;line-height:10px;color:#3a3a3a;-webkit-text-stroke:0.15px #3a3a3a;left:1063.50px;width:121.50px;text-align:center;-webkit-text-stroke:0.05px #3a3a3a;">M</div><div class="t" style="top:142.13px;font-family:'Liberation Sans', sans-serif;font-size:10px;line-height:10px;color:#3a3a3a;-webkit-text-stroke:0.15px #3a3a3a;left:1185.00px;width:120.00px;text-align:center;-webkit-text-stroke:0.05px #3a3a3a;">N</div><div class="t" style="top:175.40px;font-family:'Liberation Serif', serif;font-size:32px;line-height:32px;color:#3a3030;-webkit-text-stroke:0.18px #3a3030;left:59.70px;-webkit-text-stroke:0.45px #3a3030;"><span style="display:inline-block;transform:scaleX(0.8946);transform-origin:left">GUEST LIST</span></div><div class="t" style="top:231.39px;font-family:'Liberation Serif', serif;font-size:11px;line-height:11px;color:#4a4242;-webkit-text-stroke:0.18px #4a4242;left:56.00px;"><span style="display:inline-block;transform:scaleX(0.8829);transform-origin:left">RSVP Date:</span></div><div class="t" style="top:231.81px;font-family:'Liberation Serif', serif;font-size:10.5px;line-height:10.5px;color:#4a4242;-webkit-text-stroke:0.18px #4a4242;left:169.50px;"><span style="display:inline-block;transform:scaleX(0.9920);transform-origin:left"><span class="od">7</span>/<span class="od">3</span><span class="o">0</span>/<span class="o">2</span><span class="o">0</span><span class="o">2</span><span class="o">2</span></span></div><div class="t" style="top:247.39px;font-family:'Liberation Serif', serif;font-size:11px;line-height:11px;color:#4a4242;-webkit-text-stroke:0.18px #4a4242;left:56.00px;"><span style="display:inline-block;transform:scaleX(0.8773);transform-origin:left">Days Left:</span></div><div class="t" style="top:247.81px;font-family:'Liberation Serif', serif;font-size:10.5px;line-height:10.5px;color:#4a4242;-webkit-text-stroke:0.18px #4a4242;left:169.50px;"><span style="display:inline-block;transform:scaleX(0.9641);transform-origin:left"><span class="od">7</span><span class="od">7</span> day/s left</span></div><div class="t" style="top:214.81px;font-family:'Liberation Serif', serif;font-size:10.5px;line-height:10.5px;color:#4a4242;-webkit-text-stroke:0.18px #4a4242;left:436.50px;"><span style="display:inline-block;transform:scaleX(1.0247);transform-origin:left">Fill out these non-mandatory fields</span></div><div class="t" style="top:231.31px;font-family:'Liberation Serif', serif;font-size:10.5px;line-height:10.5px;color:#4a4242;-webkit-text-stroke:0.18px #4a4242;left:436.50px;"><span style="display:inline-block;transform:scaleX(1.0139);transform-origin:left">Fill out these mandatory fields</span></div><div class="t" style="top:247.81px;font-family:'Liberation Serif', serif;font-size:10.5px;line-height:10.5px;color:#4a4242;-webkit-text-stroke:0.18px #4a4242;left:436.50px;"><span style="display:inline-block;transform:scaleX(0.9949);transform-origin:left">Fields filled with grey color are calculated fields. Please DO NOT update these</span></div><div class="t" style="top:214.81px;font-family:'Liberation Serif', serif;font-size:10.5px;line-height:10.5px;color:#4a4242;-webkit-text-stroke:0.18px #4a4242;left:856.20px;"><span style="display:inline-block;transform:scaleX(1.0110);transform-origin:left">All guests should be tracked separately even if they are part of the same party/household, for e.g. plus one</span></div><div class="t" style="top:231.31px;font-family:'Liberation Serif', serif;font-size:10.5px;line-height:10.5px;color:#4a4242;-webkit-text-stroke:0.18px #4a4242;left:856.20px;"><span style="display:inline-block;transform:scaleX(1.0080);transform-origin:left">filled out for one member of each household. For the invitations, you only need to track it for the household</span></div><div class="t" style="top:247.81px;font-family:'Liberation Serif', serif;font-size:10.5px;line-height:10.5px;color:#2e2626;font-weight:700;-webkit-text-stroke:0.18px #2e2626;left:856.20px;"><span style="display:inline-block;transform:scaleX(0.9890);transform-origin:left">you&#x27;ll need to fill it with proper information. Any cells highlighted in GREY color should not be filled</span></div><div class="t" style="top:277.12px;font-family:'Liberation Serif', serif;font-size:10px;line-height:10px;color:#2e2626;font-weight:700;-webkit-text-stroke:0.18px #2e2626;left:56.00px;"><span style="display:inline-block;transform:scaleX(0.9473);transform-origin:left">INVITATIONS</span></div><div class="t" style="top:292.11px;font-family:'Liberation Serif', serif;font-size:10.5px;line-height:10.5px;color:#4f5d62;-webkit-text-stroke:0.18px #4f5d62;left:56.00px;">Invited Guests</div><div class="t" style="top:292.11px;font-family:'Liberation Serif', serif;font-size:10.5px;line-height:10.5px;color:#4a4242;-webkit-text-stroke:0.18px #4a4242;left:167.50px;width:97.50px;text-align:center;"><span class="o">1</span><span class="o">2</span></div><div class="t" style="top:306.81px;font-family:'Liberation Serif', serif;font-size:10.5px;line-height:10.5px;color:#4f5d62;-webkit-text-stroke:0.18px #4f5d62;left:56.00px;">No. of Invitations</div><div class="t" style="top:306.81px;font-family:'Liberation Serif', serif;font-size:10.5px;line-height:10.5px;color:#4a4242;-webkit-text-stroke:0.18px #4a4242;left:167.50px;width:97.50px;text-align:center;"><span class="oa">6</span></div><div class="t" style="top:321.51px;font-family:'Liberation Serif', serif;font-size:10.5px;line-height:10.5px;color:#4f5d62;-webkit-text-stroke:0.18px #4f5d62;left:56.00px;">Invitation Sent</div><div class="t" style="top:321.51px;font-family:'Liberation Serif', serif;font-size:10.5px;line-height:10.5px;color:#4a4242;-webkit-text-stroke:0.18px #4a4242;left:167.50px;width:97.50px;text-align:center;"><span class="od">5</span></div><div class="t" style="top:336.21px;font-family:'Liberation Serif', serif;font-size:10.5px;line-height:10.5px;color:#4f5d62;-webkit-text-stroke:0.18px #4f5d62;left:56.00px;">Remaining Invitations</div><div class="t" style="top:336.21px;font-family:'Liberation Serif', serif;font-size:10.5px;line-height:10.5px;color:#4a4242;-webkit-text-stroke:0.18px #4a4242;left:167.50px;width:97.50px;text-align:center;"><span class="o">1</span></div><div class="t" style="top:277.12px;font-family:'Liberation Serif', serif;font-size:10px;line-height:10px;color:#2e2626;font-weight:700;-webkit-text-stroke:0.18px #2e2626;left:304.00px;"><span style="display:inline-block;transform:scaleX(0.9425);transform-origin:left">ATTENDANCE</span></div><div class="t" style="top:276.71px;font-family:'Liberation Serif', serif;font-size:10.5px;line-height:10.5px;color:#3a3232;font-weight:700;-webkit-text-stroke:0.18px #3a3232;left:434.50px;width:98.00px;text-align:center;">Rehearsal Dinner</div><div class="t" style="top:276.71px;font-family:'Liberation Serif', serif;font-size:10.5px;line-height:10.5px;color:#3a3232;font-weight:700;-webkit-text-stroke:0.18px #3a3232;left:532.50px;width:100.50px;text-align:center;">Ceremony</div><div class="t" style="top:276.71px;font-family:'Liberation Serif', serif;font-size:10.5px;line-height:10.5px;color:#3a3232;font-weight:700;-webkit-text-stroke:0.18px #3a3232;left:633.00px;width:101.50px;text-align:center;">Reception</div><div class="t" style="top:292.11px;font-family:'Liberation Serif', serif;font-size:10.5px;line-height:10.5px;color:#4f5d62;-webkit-text-stroke:0.18px #4f5d62;left:304.00px;">Attending</div><div class="t" style="top:292.11px;font-family:'Liberation Serif', serif;font-size:10.5px;line-height:10.5px;color:#4a4242;-webkit-text-stroke:0.18px #4a4242;left:434.50px;width:98.00px;text-align:center;"><span class="o">1</span><span class="o">0</span></div><div class="t" style="top:292.11px;font-family:'Liberation Serif', serif;font-size:10.5px;line-height:10.5px;color:#4a4242;-webkit-text-stroke:0.18px #4a4242;left:532.50px;width:100.50px;text-align:center;"><span class="o">1</span><span class="o">1</span></div><div class="t" style="top:292.11px;font-family:'Liberation Serif', serif;font-size:10.5px;line-height:10.5px;color:#4a4242;-webkit-text-stroke:0.18px #4a4242;left:633.00px;width:101.50px;text-align:center;"><span class="o">1</span><span class="o">2</span></div><div class="t" style="top:306.81px;font-family:'Liberation Serif', serif;font-size:10.5px;line-height:10.5px;color:#4f5d62;-webkit-text-stroke:0.18px #4f5d62;left:304.00px;">Not Attending</div><div class="t" style="top:306.81px;font-family:'Liberation Serif', serif;font-size:10.5px;line-height:10.5px;color:#4a4242;-webkit-text-stroke:0.18px #4a4242;left:434.50px;width:98.00px;text-align:center;"><span class="o">2</span></div><div class="t" style="top:306.81px;font-family:'Liberation Serif', serif;font-size:10.5px;line-height:10.5px;color:#4a4242;-webkit-text-stroke:0.18px #4a4242;left:532.50px;width:100.50px;text-align:center;"><span class="o">1</span></div><div class="t" style="top:306.81px;font-family:'Liberation Serif', serif;font-size:10.5px;line-height:10.5px;color:#4a4242;-webkit-text-stroke:0.18px #4a4242;left:633.00px;width:101.50px;text-align:center;"><span class="o">0</span></div><div class="t" style="top:321.51px;font-family:'Liberation Serif', serif;font-size:10.5px;line-height:10.5px;color:#4f5d62;-webkit-text-stroke:0.18px #4f5d62;left:304.00px;">Waiting Confirmation</div><div class="t" style="top:321.51px;font-family:'Liberation Serif', serif;font-size:10.5px;line-height:10.5px;color:#4a4242;-webkit-text-stroke:0.18px #4a4242;left:434.50px;width:98.00px;text-align:center;"><span class="o">0</span></div><div class="t" style="top:321.51px;font-family:'Liberation Serif', serif;font-size:10.5px;line-height:10.5px;color:#4a4242;-webkit-text-stroke:0.18px #4a4242;left:532.50px;width:100.50px;text-align:center;"><span class="o">0</span></div><div class="t" style="top:321.51px;font-family:'Liberation Serif', serif;font-size:10.5px;line-height:10.5px;color:#4a4242;-webkit-text-stroke:0.18px #4a4242;left:633.00px;width:101.50px;text-align:center;"><span class="o">0</span></div><div class="t" style="top:351.21px;font-family:'Liberation Serif', serif;font-size:10.5px;line-height:10.5px;color:#4f5d62;-webkit-text-stroke:0.18px #4f5d62;left:304.00px;">Ben</div><div class="t" style="top:351.21px;font-family:'Liberation Serif', serif;font-size:10.5px;line-height:10.5px;color:#4a4242;-webkit-text-stroke:0.18px #4a4242;left:434.50px;width:98.00px;text-align:center;"><span class="od">3</span></div><div class="t" style="top:351.21px;font-family:'Liberation Serif', serif;font-size:10.5px;line-height:10.5px;color:#4a4242;-webkit-text-stroke:0.18px #4a4242;left:532.50px;width:100.50px;text-align:center;"><span class="od">3</span></div><div class="t" style="top:351.21px;font-family:'Liberation Serif', serif;font-size:10.5px;line-height:10.5px;color:#4a4242;-webkit-text-stroke:0.18px #4a4242;left:633.00px;width:101.50px;text-align:center;"><span class="od">3</span></div><div class="t" style="top:366.21px;font-family:'Liberation Serif', serif;font-size:10.5px;line-height:10.5px;color:#4f5d62;-webkit-text-stroke:0.18px #4f5d62;left:304.00px;">Kelly</div><div class="t" style="top:366.21px;font-family:'Liberation Serif', serif;font-size:10.5px;line-height:10.5px;color:#4a4242;-webkit-text-stroke:0.18px #4a4242;left:434.50px;width:98.00px;text-align:center;"><span class="od">3</span></div><div class="t" style="top:366.21px;font-family:'Liberation Serif', serif;font-size:10.5px;line-height:10.5px;color:#4a4242;-webkit-text-stroke:0.18px #4a4242;left:532.50px;width:100.50px;text-align:center;"><span class="od">4</span></div><div class="t" style="top:366.21px;font-family:'Liberation Serif', serif;font-size:10.5px;line-height:10.5px;color:#4a4242;-webkit-text-stroke:0.18px #4a4242;left:633.00px;width:101.50px;text-align:center;"><span class="od">4</span></div><div class="t" style="top:381.21px;font-family:'Liberation Serif', serif;font-size:10.5px;line-height:10.5px;color:#4f5d62;-webkit-text-stroke:0.18px #4f5d62;left:304.00px;">Others</div><div class="t" style="top:381.21px;font-family:'Liberation Serif', serif;font-size:10.5px;line-height:10.5px;color:#4a4242;-webkit-text-stroke:0.18px #4a4242;left:434.50px;width:98.00px;text-align:center;"><span class="od">4</span></div><div class="t" style="top:381.21px;font-family:'Liberation Serif', serif;font-size:10.5px;line-height:10.5px;color:#4a4242;-webkit-text-stroke:0.18px #4a4242;left:532.50px;width:100.50px;text-align:center;"><span class="od">4</span></div><div class="t" style="top:381.21px;font-family:'Liberation Serif', serif;font-size:10.5px;line-height:10.5px;color:#4a4242;-webkit-text-stroke:0.18px #4a4242;left:633.00px;width:101.50px;text-align:center;"><span class="od">5</span></div><div class="t" style="top:336.21px;font-family:'Liberation Serif', serif;font-size:10.5px;line-height:10.5px;color:#2e2626;font-weight:700;-webkit-text-stroke:0.18px #2e2626;left:304.00px;">Attending Guests of:</div><div class="t" style="top:277.12px;font-family:'Liberation Serif', serif;font-size:10px;line-height:10px;color:#2e2626;font-weight:700;-webkit-text-stroke:0.18px #2e2626;left:856.50px;"><span style="display:inline-block;transform:scaleX(0.9446);transform-origin:left">GIFTS / RED PACKETS $</span></div><div class="t" style="top:306.81px;font-family:'Liberation Serif', serif;font-size:10.5px;line-height:10.5px;color:#2e2626;font-weight:700;-webkit-text-stroke:0.18px #2e2626;left:856.50px;">Gifts of:</div><div class="t" style="top:292.11px;font-family:'Liberation Serif', serif;font-size:10.5px;line-height:10.5px;color:#4f5d62;-webkit-text-stroke:0.18px #4f5d62;left:856.50px;">Total received $</div><div class="t" style="top:292.11px;font-family:'Liberation Serif', serif;font-size:10.5px;line-height:10.5px;color:#4a4242;-webkit-text-stroke:0.18px #4a4242;left:1063.50px;width:121.50px;text-align:center;">$<span class="o">1</span><span class="od">4</span><span class="o">0</span></div><div class="t" style="top:321.51px;font-family:'Liberation Serif', serif;font-size:10.5px;line-height:10.5px;color:#4f5d62;-webkit-text-stroke:0.18px #4f5d62;left:856.50px;">Ben</div><div class="t" style="top:321.51px;font-family:'Liberation Serif', serif;font-size:10.5px;line-height:10.5px;color:#4a4242;-webkit-text-stroke:0.18px #4a4242;left:1063.50px;width:121.50px;text-align:center;">$<span class="o">2</span><span class="o">0</span></div><div class="t" style="top:336.21px;font-family:'Liberation Serif', serif;font-size:10.5px;line-height:10.5px;color:#4f5d62;-webkit-text-stroke:0.18px #4f5d62;left:856.50px;">Kelly</div><div class="t" style="top:336.21px;font-family:'Liberation Serif', serif;font-size:10.5px;line-height:10.5px;color:#4a4242;-webkit-text-stroke:0.18px #4a4242;left:1063.50px;width:121.50px;text-align:center;">$<span class="o">1</span><span class="o">1</span><span class="od">5</span></div><div class="t" style="top:351.21px;font-family:'Liberation Serif', serif;font-size:10.5px;line-height:10.5px;color:#4f5d62;-webkit-text-stroke:0.18px #4f5d62;left:856.50px;">Others</div><div class="t" style="top:351.21px;font-family:'Liberation Serif', serif;font-size:10.5px;line-height:10.5px;color:#4a4242;-webkit-text-stroke:0.18px #4a4242;left:1063.50px;width:121.50px;text-align:center;">$<span class="od">5</span></div><div class="t" style="top:421.31px;font-family:'Liberation Serif', serif;font-size:10.5px;line-height:10.5px;color:#354848;-webkit-text-stroke:0.18px #354848;left:53.50px;width:211.00px;text-align:center;">Guest List</div><div class="t" style="top:421.31px;font-family:'Liberation Serif', serif;font-size:10.5px;line-height:10.5px;color:#354848;-webkit-text-stroke:0.18px #354848;left:301.50px;width:534.00px;text-align:center;">Guest Information</div><div class="t" style="top:443.41px;font-family:'Liberation Serif', serif;font-size:10.5px;line-height:10.5px;color:#4a4242;-webkit-text-stroke:0.18px #4a4242;left:56.00px;">First Name</div><div class="t" style="top:443.41px;font-family:'Liberation Serif', serif;font-size:10.5px;line-height:10.5px;color:#4a4242;-webkit-text-stroke:0.18px #4a4242;left:170.00px;">Last Name</div><div class="t" style="top:443.41px;font-family:'Liberation Serif', serif;font-size:10.5px;line-height:10.5px;color:#4a4242;-webkit-text-stroke:0.18px #4a4242;left:304.00px;">Full Name</div><div class="t" style="top:443.41px;font-family:'Liberation Serif', serif;font-size:10.5px;line-height:10.5px;color:#4a4242;-webkit-text-stroke:0.18px #4a4242;left:437.00px;">Age Group</div><div class="t" style="top:443.41px;font-family:'Liberation Serif', serif;font-size:10.5px;line-height:10.5px;color:#4a4242;-webkit-text-stroke:0.18px #4a4242;left:535.00px;">Guest of</div><div class="t" style="top:443.41px;font-family:'Liberation Serif', serif;font-size:10.5px;line-height:10.5px;color:#4a4242;-webkit-text-stroke:0.18px #4a4242;left:636.00px;">Invitation Group</div><div class="t" style="top:436.31px;font-family:'Liberation Serif', serif;font-size:10.5px;line-height:10.5px;color:#4a4242;-webkit-text-stroke:0.18px #4a4242;left:737.00px;">Covid Vaccination</div><div class="t" style="top:449.81px;font-family:'Liberation Serif', serif;font-size:10.5px;line-height:10.5px;color:#4a4242;-webkit-text-stroke:0.18px #4a4242;left:737.00px;">Status</div><div class="t" style="top:443.41px;font-family:'Liberation Serif', serif;font-size:10.5px;line-height:10.5px;color:#4a4242;-webkit-text-stroke:0.18px #4a4242;left:856.50px;">Name on Envelope</div><div class="t" style="top:443.41px;font-family:'Liberation Serif', serif;font-size:10.5px;line-height:10.5px;color:#4a4242;-webkit-text-stroke:0.18px #4a4242;left:1066.00px;">Address <span class="o">1</span></div><div class="t" style="top:443.41px;font-family:'Liberation Serif', serif;font-size:10.5px;line-height:10.5px;color:#4a4242;-webkit-text-stroke:0.18px #4a4242;left:1187.50px;">Address <span class="o">2</span></div><div class="t" style="top:464.09px;font-family:'Liberation Serif', serif;font-size:10.5px;line-height:10.5px;color:#4a4242;-webkit-text-stroke:0.18px #4a4242;left:56.00px;">Benedict</div><div class="t" style="top:464.09px;font-family:'Liberation Serif', serif;font-size:10.5px;line-height:10.5px;color:#4a4242;-webkit-text-stroke:0.18px #4a4242;left:170.00px;">Tan</div><div class="t" style="top:464.09px;font-family:'Liberation Serif', serif;font-size:10.5px;line-height:10.5px;color:#4a4242;-webkit-text-stroke:0.18px #4a4242;left:304.00px;">Benedict Tan</div><div class="t" style="top:464.09px;font-family:'Liberation Serif', serif;font-size:10.5px;line-height:10.5px;color:#4a4242;-webkit-text-stroke:0.18px #4a4242;left:437.00px;">Adult</div><div class="t" style="top:464.09px;font-family:'Liberation Serif', serif;font-size:10.5px;line-height:10.5px;color:#4a4242;-webkit-text-stroke:0.18px #4a4242;left:535.00px;">Both</div><div class="t" style="top:464.09px;font-family:'Liberation Serif', serif;font-size:10.5px;line-height:10.5px;color:#4a4242;-webkit-text-stroke:0.18px #4a4242;left:636.00px;">Ben-Kelly</div><div class="t" style="top:464.09px;font-family:'Liberation Serif', serif;font-size:10.5px;line-height:10.5px;color:#4a4242;-webkit-text-stroke:0.18px #4a4242;left:737.00px;">Vaccinated</div><div class="t" style="top:464.09px;font-family:'Liberation Serif', serif;font-size:10.5px;line-height:10.5px;color:#4a4242;-webkit-text-stroke:0.18px #4a4242;left:856.50px;">Mr &amp; Mrs Benedict and Kelly</div><div class="t" style="top:464.09px;font-family:'Liberation Serif', serif;font-size:10.5px;line-height:10.5px;color:#4a4242;-webkit-text-stroke:0.18px #4a4242;left:1066.00px;">XX</div><div class="t" style="top:464.09px;font-family:'Liberation Serif', serif;font-size:10.5px;line-height:10.5px;color:#4a4242;-webkit-text-stroke:0.18px #4a4242;left:1187.50px;">Level <span class="od">3</span></div><div class="t" style="top:477.83px;font-family:'Liberation Serif', serif;font-size:10.5px;line-height:10.5px;color:#4a4242;-webkit-text-stroke:0.18px #4a4242;left:56.00px;">Kelly</div><div class="t" style="top:477.83px;font-family:'Liberation Serif', serif;font-size:10.5px;line-height:10.5px;color:#4a4242;-webkit-text-stroke:0.18px #4a4242;left:170.00px;">Wong</div><div class="t" style="top:477.83px;font-family:'Liberation Serif', serif;font-size:10.5px;line-height:10.5px;color:#4a4242;-webkit-text-stroke:0.18px #4a4242;left:304.00px;">Kelly Wong</div><div class="t" style="top:477.83px;font-family:'Liberation Serif', serif;font-size:10.5px;line-height:10.5px;color:#4a4242;-webkit-text-stroke:0.18px #4a4242;left:437.00px;">Adult</div><div class="t" style="top:477.83px;font-family:'Liberation Serif', serif;font-size:10.5px;line-height:10.5px;color:#4a4242;-webkit-text-stroke:0.18px #4a4242;left:535.00px;">Both</div><div class="t" style="top:477.83px;font-family:'Liberation Serif', serif;font-size:10.5px;line-height:10.5px;color:#4a4242;-webkit-text-stroke:0.18px #4a4242;left:636.00px;">Ben-Kelly</div><div class="t" style="top:477.83px;font-family:'Liberation Serif', serif;font-size:10.5px;line-height:10.5px;color:#4a4242;-webkit-text-stroke:0.18px #4a4242;left:737.00px;">Not vaccinated</div><div class="t" style="top:491.56px;font-family:'Liberation Serif', serif;font-size:10.5px;line-height:10.5px;color:#4a4242;-webkit-text-stroke:0.18px #4a4242;left:56.00px;">Irene</div><div class="t" style="top:491.56px;font-family:'Liberation Serif', serif;font-size:10.5px;line-height:10.5px;color:#4a4242;-webkit-text-stroke:0.18px #4a4242;left:170.00px;">Foo</div><div class="t" style="top:491.56px;font-family:'Liberation Serif', serif;font-size:10.5px;line-height:10.5px;color:#4a4242;-webkit-text-stroke:0.18px #4a4242;left:304.00px;">Irene Foo</div><div class="t" style="top:491.56px;font-family:'Liberation Serif', serif;font-size:10.5px;line-height:10.5px;color:#4a4242;-webkit-text-stroke:0.18px #4a4242;left:437.00px;">Adult</div><div class="t" style="top:491.56px;font-family:'Liberation Serif', serif;font-size:10.5px;line-height:10.5px;color:#4a4242;-webkit-text-stroke:0.18px #4a4242;left:535.00px;">Ben</div><div class="t" style="top:491.56px;font-family:'Liberation Serif', serif;font-size:10.5px;line-height:10.5px;color:#4a4242;-webkit-text-stroke:0.18px #4a4242;left:636.00px;">Ben&#x27;s Parents</div><div class="t" style="top:491.56px;font-family:'Liberation Serif', serif;font-size:10.5px;line-height:10.5px;color:#4a4242;-webkit-text-stroke:0.18px #4a4242;left:737.00px;">Vaccinated</div><div class="t" style="top:491.56px;font-family:'Liberation Serif', serif;font-size:10.5px;line-height:10.5px;color:#4a4242;-webkit-text-stroke:0.18px #4a4242;left:856.50px;">Irene,  Kenneth and Deanne</div><div class="t" style="top:491.56px;font-family:'Liberation Serif', serif;font-size:10.5px;line-height:10.5px;color:#4a4242;-webkit-text-stroke:0.18px #4a4242;left:1066.00px;">XX</div><div class="t" style="top:491.56px;font-family:'Liberation Serif', serif;font-size:10.5px;line-height:10.5px;color:#4a4242;-webkit-text-stroke:0.18px #4a4242;left:1187.50px;">Level <span class="od">3</span></div><div class="t" style="top:505.30px;font-family:'Liberation Serif', serif;font-size:10.5px;line-height:10.5px;color:#4a4242;-webkit-text-stroke:0.18px #4a4242;left:56.00px;">Kenneth</div><div class="t" style="top:505.30px;font-family:'Liberation Serif', serif;font-size:10.5px;line-height:10.5px;color:#4a4242;-webkit-text-stroke:0.18px #4a4242;left:170.00px;">Tan</div><div class="t" style="top:505.30px;font-family:'Liberation Serif', serif;font-size:10.5px;line-height:10.5px;color:#4a4242;-webkit-text-stroke:0.18px #4a4242;left:304.00px;">Kenneth Tan</div><div class="t" style="top:505.30px;font-family:'Liberation Serif', serif;font-size:10.5px;line-height:10.5px;color:#4a4242;-webkit-text-stroke:0.18px #4a4242;left:437.00px;">Adult</div><div class="t" style="top:505.30px;font-family:'Liberation Serif', serif;font-size:10.5px;line-height:10.5px;color:#4a4242;-webkit-text-stroke:0.18px #4a4242;left:535.00px;">Ben</div><div class="t" style="top:505.30px;font-family:'Liberation Serif', serif;font-size:10.5px;line-height:10.5px;color:#4a4242;-webkit-text-stroke:0.18px #4a4242;left:636.00px;">Ben&#x27;s Parents</div><div class="t" style="top:505.30px;font-family:'Liberation Serif', serif;font-size:10.5px;line-height:10.5px;color:#4a4242;-webkit-text-stroke:0.18px #4a4242;left:737.00px;">Vaccinated</div><div class="t" style="top:519.04px;font-family:'Liberation Serif', serif;font-size:10.5px;line-height:10.5px;color:#4a4242;-webkit-text-stroke:0.18px #4a4242;left:56.00px;">Deanne</div><div class="t" style="top:519.04px;font-family:'Liberation Serif', serif;font-size:10.5px;line-height:10.5px;color:#4a4242;-webkit-text-stroke:0.18px #4a4242;left:170.00px;">Tan</div><div class="t" style="top:519.04px;font-family:'Liberation Serif', serif;font-size:10.5px;line-height:10.5px;color:#4a4242;-webkit-text-stroke:0.18px #4a4242;left:304.00px;">Deanne Tan</div><div class="t" style="top:519.04px;font-family:'Liberation Serif', serif;font-size:10.5px;line-height:10.5px;color:#4a4242;-webkit-text-stroke:0.18px #4a4242;left:437.00px;">Kid</div><div class="t" style="top:519.04px;font-family:'Liberation Serif', serif;font-size:10.5px;line-height:10.5px;color:#4a4242;-webkit-text-stroke:0.18px #4a4242;left:535.00px;">Ben</div><div class="t" style="top:519.04px;font-family:'Liberation Serif', serif;font-size:10.5px;line-height:10.5px;color:#4a4242;-webkit-text-stroke:0.18px #4a4242;left:636.00px;">Ben&#x27;s Parents</div><div class="t" style="top:519.04px;font-family:'Liberation Serif', serif;font-size:10.5px;line-height:10.5px;color:#4a4242;-webkit-text-stroke:0.18px #4a4242;left:737.00px;">Vaccinated</div><div class="t" style="top:532.77px;font-family:'Liberation Serif', serif;font-size:10.5px;line-height:10.5px;color:#4a4242;-webkit-text-stroke:0.18px #4a4242;left:56.00px;">Irene</div><div class="t" style="top:532.77px;font-family:'Liberation Serif', serif;font-size:10.5px;line-height:10.5px;color:#4a4242;-webkit-text-stroke:0.18px #4a4242;left:170.00px;">Wong</div><div class="t" style="top:532.77px;font-family:'Liberation Serif', serif;font-size:10.5px;line-height:10.5px;color:#4a4242;-webkit-text-stroke:0.18px #4a4242;left:304.00px;">Irene Wong</div><div class="t" style="top:532.77px;font-family:'Liberation Serif', serif;font-size:10.5px;line-height:10.5px;color:#4a4242;-webkit-text-stroke:0.18px #4a4242;left:437.00px;">Adult</div><div class="t" style="top:532.77px;font-family:'Liberation Serif', serif;font-size:10.5px;line-height:10.5px;color:#4a4242;-webkit-text-stroke:0.18px #4a4242;left:535.00px;">Kelly</div><div class="t" style="top:532.77px;font-family:'Liberation Serif', serif;font-size:10.5px;line-height:10.5px;color:#4a4242;-webkit-text-stroke:0.18px #4a4242;left:636.00px;">Kelly&#x27;s Parents</div><div class="t" style="top:532.77px;font-family:'Liberation Serif', serif;font-size:10.5px;line-height:10.5px;color:#4a4242;-webkit-text-stroke:0.18px #4a4242;left:737.00px;">Vaccinated</div><div class="t" style="top:532.77px;font-family:'Liberation Serif', serif;font-size:10.5px;line-height:10.5px;color:#4a4242;-webkit-text-stroke:0.18px #4a4242;left:856.50px;">Mrs Irene</div><div class="t" style="top:532.77px;font-family:'Liberation Serif', serif;font-size:10.5px;line-height:10.5px;color:#4a4242;-webkit-text-stroke:0.18px #4a4242;left:1066.00px;">XX</div><div class="t" style="top:532.77px;font-family:'Liberation Serif', serif;font-size:10.5px;line-height:10.5px;color:#4a4242;-webkit-text-stroke:0.18px #4a4242;left:1187.50px;">Level <span class="od">3</span></div><div class="t" style="top:546.51px;font-family:'Liberation Serif', serif;font-size:10.5px;line-height:10.5px;color:#4a4242;-webkit-text-stroke:0.18px #4a4242;left:56.00px;">Esther</div><div class="t" style="top:546.51px;font-family:'Liberation Serif', serif;font-size:10.5px;line-height:10.5px;color:#4a4242;-webkit-text-stroke:0.18px #4a4242;left:170.00px;">Chick</div><div class="t" style="top:546.51px;font-family:'Liberation Serif', serif;font-size:10.5px;line-height:10.5px;color:#4a4242;-webkit-text-stroke:0.18px #4a4242;left:304.00px;">Esther Chick</div><div class="t" style="top:546.51px;font-family:'Liberation Serif', serif;font-size:10.5px;line-height:10.5px;color:#4a4242;-webkit-text-stroke:0.18px #4a4242;left:437.00px;">Adult</div><div class="t" style="top:546.51px;font-family:'Liberation Serif', serif;font-size:10.5px;line-height:10.5px;color:#4a4242;-webkit-text-stroke:0.18px #4a4242;left:535.00px;">Kelly</div><div class="t" style="top:546.51px;font-family:'Liberation Serif', serif;font-size:10.5px;line-height:10.5px;color:#4a4242;-webkit-text-stroke:0.18px #4a4242;left:636.00px;">Kelly&#x27;s Elser Sister</div><div class="t" style="top:546.51px;font-family:'Liberation Serif', serif;font-size:10.5px;line-height:10.5px;color:#4a4242;-webkit-text-stroke:0.18px #4a4242;left:737.00px;">Vaccinated</div><div class="t" style="top:546.51px;font-family:'Liberation Serif', serif;font-size:10.5px;line-height:10.5px;color:#4a4242;-webkit-text-stroke:0.18px #4a4242;left:856.50px;">Mr &amp; Mrs Lionel and Esther</div><div class="t" style="top:546.51px;font-family:'Liberation Serif', serif;font-size:10.5px;line-height:10.5px;color:#4a4242;-webkit-text-stroke:0.18px #4a4242;left:1066.00px;">XX</div><div class="t" style="top:546.51px;font-family:'Liberation Serif', serif;font-size:10.5px;line-height:10.5px;color:#4a4242;-webkit-text-stroke:0.18px #4a4242;left:1187.50px;">Level <span class="od">3</span></div><div class="t" style="top:560.24px;font-family:'Liberation Serif', serif;font-size:10.5px;line-height:10.5px;color:#4a4242;-webkit-text-stroke:0.18px #4a4242;left:56.00px;">Lionel</div><div class="t" style="top:560.24px;font-family:'Liberation Serif', serif;font-size:10.5px;line-height:10.5px;color:#4a4242;-webkit-text-stroke:0.18px #4a4242;left:170.00px;">See</div><div class="t" style="top:560.24px;font-family:'Liberation Serif', serif;font-size:10.5px;line-height:10.5px;color:#4a4242;-webkit-text-stroke:0.18px #4a4242;left:304.00px;">Lionel See</div><div class="t" style="top:560.24px;font-family:'Liberation Serif', serif;font-size:10.5px;line-height:10.5px;color:#4a4242;-webkit-text-stroke:0.18px #4a4242;left:437.00px;">Adult</div><div class="t" style="top:560.24px;font-family:'Liberation Serif', serif;font-size:10.5px;line-height:10.5px;color:#4a4242;-webkit-text-stroke:0.18px #4a4242;left:535.00px;">Kelly</div><div class="t" style="top:560.24px;font-family:'Liberation Serif', serif;font-size:10.5px;line-height:10.5px;color:#4a4242;-webkit-text-stroke:0.18px #4a4242;left:636.00px;">Kelly&#x27;s Elser Sister</div><div class="t" style="top:560.24px;font-family:'Liberation Serif', serif;font-size:10.5px;line-height:10.5px;color:#4a4242;-webkit-text-stroke:0.18px #4a4242;left:737.00px;">Vaccinated</div><div class="t" style="top:573.98px;font-family:'Liberation Serif', serif;font-size:10.5px;line-height:10.5px;color:#4a4242;-webkit-text-stroke:0.18px #4a4242;left:56.00px;">Isabel</div><div class="t" style="top:573.98px;font-family:'Liberation Serif', serif;font-size:10.5px;line-height:10.5px;color:#4a4242;-webkit-text-stroke:0.18px #4a4242;left:170.00px;">See</div><div class="t" style="top:573.98px;font-family:'Liberation Serif', serif;font-size:10.5px;line-height:10.5px;color:#4a4242;-webkit-text-stroke:0.18px #4a4242;left:304.00px;">Isabel See</div><div class="t" style="top:573.98px;font-family:'Liberation Serif', serif;font-size:10.5px;line-height:10.5px;color:#4a4242;-webkit-text-stroke:0.18px #4a4242;left:437.00px;">Kid</div><div class="t" style="top:573.98px;font-family:'Liberation Serif', serif;font-size:10.5px;line-height:10.5px;color:#4a4242;-webkit-text-stroke:0.18px #4a4242;left:535.00px;">Kelly</div><div class="t" style="top:573.98px;font-family:'Liberation Serif', serif;font-size:10.5px;line-height:10.5px;color:#4a4242;-webkit-text-stroke:0.18px #4a4242;left:636.00px;">Kelly&#x27;s Elser Sister</div><div class="t" style="top:573.98px;font-family:'Liberation Serif', serif;font-size:10.5px;line-height:10.5px;color:#4a4242;-webkit-text-stroke:0.18px #4a4242;left:737.00px;">Vaccinated</div><div class="t" style="top:587.72px;font-family:'Liberation Serif', serif;font-size:10.5px;line-height:10.5px;color:#4a4242;-webkit-text-stroke:0.18px #4a4242;left:56.00px;">Lilian</div><div class="t" style="top:587.72px;font-family:'Liberation Serif', serif;font-size:10.5px;line-height:10.5px;color:#4a4242;-webkit-text-stroke:0.18px #4a4242;left:170.00px;">Lee</div><div class="t" style="top:587.72px;font-family:'Liberation Serif', serif;font-size:10.5px;line-height:10.5px;color:#4a4242;-webkit-text-stroke:0.18px #4a4242;left:304.00px;">Lilian Lee</div><div class="t" style="top:587.72px;font-family:'Liberation Serif', serif;font-size:10.5px;line-height:10.5px;color:#4a4242;-webkit-text-stroke:0.18px #4a4242;left:437.00px;">Adult</div><div class="t" style="top:587.72px;font-family:'Liberation Serif', serif;font-size:10.5px;line-height:10.5px;color:#4a4242;-webkit-text-stroke:0.18px #4a4242;left:535.00px;">Kelly&#x27;s Parents</div><div class="t" style="top:587.72px;font-family:'Liberation Serif', serif;font-size:10.5px;line-height:10.5px;color:#4a4242;-webkit-text-stroke:0.18px #4a4242;left:636.00px;">Lilian</div><div class="t" style="top:587.72px;font-family:'Liberation Serif', serif;font-size:10.5px;line-height:10.5px;color:#4a4242;-webkit-text-stroke:0.18px #4a4242;left:737.00px;">Vaccinated</div><div class="t" style="top:601.45px;font-family:'Liberation Serif', serif;font-size:10.5px;line-height:10.5px;color:#4a4242;-webkit-text-stroke:0.18px #4a4242;left:56.00px;">Sally</div><div class="t" style="top:601.45px;font-family:'Liberation Serif', serif;font-size:10.5px;line-height:10.5px;color:#4a4242;-webkit-text-stroke:0.18px #4a4242;left:170.00px;">Yeo</div><div class="t" style="top:601.45px;font-family:'Liberation Serif', serif;font-size:10.5px;line-height:10.5px;color:#4a4242;-webkit-text-stroke:0.18px #4a4242;left:304.00px;">Sally Yeo</div><div class="t" style="top:601.45px;font-family:'Liberation Serif', serif;font-size:10.5px;line-height:10.5px;color:#4a4242;-webkit-text-stroke:0.18px #4a4242;left:437.00px;">Adult</div><div class="t" style="top:601.45px;font-family:'Liberation Serif', serif;font-size:10.5px;line-height:10.5px;color:#4a4242;-webkit-text-stroke:0.18px #4a4242;left:535.00px;">Ben&#x27;s Parents</div><div class="t" style="top:601.45px;font-family:'Liberation Serif', serif;font-size:10.5px;line-height:10.5px;color:#4a4242;-webkit-text-stroke:0.18px #4a4242;left:636.00px;">Sally</div><div class="t" style="top:601.45px;font-family:'Liberation Serif', serif;font-size:10.5px;line-height:10.5px;color:#4a4242;-webkit-text-stroke:0.18px #4a4242;left:737.00px;">Vaccinated</div><div class="t" style="top:601.45px;font-family:'Liberation Serif', serif;font-size:10.5px;line-height:10.5px;color:#4a4242;-webkit-text-stroke:0.18px #4a4242;left:856.50px;">Mrs Sally</div><div class="t" style="top:601.45px;font-family:'Liberation Serif', serif;font-size:10.5px;line-height:10.5px;color:#4a4242;-webkit-text-stroke:0.18px #4a4242;left:1066.00px;">XX</div><div class="t" style="top:601.45px;font-family:'Liberation Serif', serif;font-size:10.5px;line-height:10.5px;color:#4a4242;-webkit-text-stroke:0.18px #4a4242;left:1187.50px;">Level <span class="od">3</span></div><div class="t" style="top:615.19px;font-family:'Liberation Serif', serif;font-size:10.5px;line-height:10.5px;color:#4a4242;-webkit-text-stroke:0.18px #4a4242;left:56.00px;">Joe</div><div class="t" style="top:615.19px;font-family:'Liberation Serif', serif;font-size:10.5px;line-height:10.5px;color:#4a4242;-webkit-text-stroke:0.18px #4a4242;left:170.00px;">Park</div><div class="t" style="top:615.19px;font-family:'Liberation Serif', serif;font-size:10.5px;line-height:10.5px;color:#4a4242;-webkit-text-stroke:0.18px #4a4242;left:304.00px;">Joe Park</div><div class="t" style="top:615.19px;font-family:'Liberation Serif', serif;font-size:10.5px;line-height:10.5px;color:#4a4242;-webkit-text-stroke:0.18px #4a4242;left:437.00px;">Adult</div><div class="t" style="top:615.19px;font-family:'Liberation Serif', serif;font-size:10.5px;line-height:10.5px;color:#4a4242;-webkit-text-stroke:0.18px #4a4242;left:535.00px;">Ben&#x27;s Parents</div><div class="t" style="top:615.19px;font-family:'Liberation Serif', serif;font-size:10.5px;line-height:10.5px;color:#4a4242;-webkit-text-stroke:0.18px #4a4242;left:636.00px;">Joe</div><div class="t" style="top:615.19px;font-family:'Liberation Serif', serif;font-size:10.5px;line-height:10.5px;color:#4a4242;-webkit-text-stroke:0.18px #4a4242;left:737.00px;">Vaccinated</div><div class="t" style="top:615.19px;font-family:'Liberation Serif', serif;font-size:10.5px;line-height:10.5px;color:#4a4242;-webkit-text-stroke:0.18px #4a4242;left:856.50px;">Mr Joe</div><div class="t" style="top:615.19px;font-family:'Liberation Serif', serif;font-size:10.5px;line-height:10.5px;color:#4a4242;-webkit-text-stroke:0.18px #4a4242;left:1066.00px;">XX</div><div class="t" style="top:615.19px;font-family:'Liberation Serif', serif;font-size:10.5px;line-height:10.5px;color:#4a4242;-webkit-text-stroke:0.18px #4a4242;left:1187.50px;">Level <span class="od">3</span></div><div class="t" style="top:159.63px;font-family:'Liberation Sans', sans-serif;font-size:10px;line-height:10px;color:#3a3a3a;-webkit-text-stroke:0.15px #3a3a3a;left:-0.50px;width:19.00px;text-align:center;">1</div><div class="t" style="top:201.13px;font-family:'Liberation Sans', sans-serif;font-size:10px;line-height:10px;color:#3a3a3a;-webkit-text-stroke:0.15px #3a3a3a;left:-0.50px;width:19.00px;text-align:center;">2</div><div class="t" style="top:216.63px;font-family:'Liberation Sans', sans-serif;font-size:10px;line-height:10px;color:#3a3a3a;-webkit-text-stroke:0.15px #3a3a3a;left:-0.50px;width:19.00px;text-align:center;">3</div><div class="t" style="top:232.63px;font-family:'Liberation Sans', sans-serif;font-size:10px;line-height:10px;color:#3a3a3a;-webkit-text-stroke:0.15px #3a3a3a;left:-0.50px;width:19.00px;text-align:center;">4</div><div class="t" style="top:249.14px;font-family:'Liberation Sans', sans-serif;font-size:10px;line-height:10px;color:#3a3a3a;-webkit-text-stroke:0.15px #3a3a3a;left:-0.50px;width:19.00px;text-align:center;">5</div><div class="t" style="top:264.14px;font-family:'Liberation Sans', sans-serif;font-size:10px;line-height:10px;color:#3a3a3a;-webkit-text-stroke:0.15px #3a3a3a;left:-0.50px;width:19.00px;text-align:center;">6</div><div class="t" style="top:277.64px;font-family:'Liberation Sans', sans-serif;font-size:10px;line-height:10px;color:#3a3a3a;-webkit-text-stroke:0.15px #3a3a3a;left:-0.50px;width:19.00px;text-align:center;">7</div><div class="t" style="top:292.34px;font-family:'Liberation Sans', sans-serif;font-size:10px;line-height:10px;color:#3a3a3a;-webkit-text-stroke:0.15px #3a3a3a;left:-0.50px;width:19.00px;text-align:center;">8</div><div class="t" style="top:307.04px;font-family:'Liberation Sans', sans-serif;font-size:10px;line-height:10px;color:#3a3a3a;-webkit-text-stroke:0.15px #3a3a3a;left:-0.50px;width:19.00px;text-align:center;">9</div><div class="t" style="top:321.74px;font-family:'Liberation Sans', sans-serif;font-size:10px;line-height:10px;color:#3a3a3a;-webkit-text-stroke:0.15px #3a3a3a;left:-0.50px;width:19.00px;text-align:center;">10</div><div class="t" style="top:336.44px;font-family:'Liberation Sans', sans-serif;font-size:10px;line-height:10px;color:#3a3a3a;-webkit-text-stroke:0.15px #3a3a3a;left:-0.50px;width:19.00px;text-align:center;">11</div><div class="t" style="top:351.44px;font-family:'Liberation Sans', sans-serif;font-size:10px;line-height:10px;color:#3a3a3a;-webkit-text-stroke:0.15px #3a3a3a;left:-0.50px;width:19.00px;text-align:center;">12</div><div class="t" style="top:366.44px;font-family:'Liberation Sans', sans-serif;font-size:10px;line-height:10px;color:#3a3a3a;-webkit-text-stroke:0.15px #3a3a3a;left:-0.50px;width:19.00px;text-align:center;">13</div><div class="t" style="top:381.44px;font-family:'Liberation Sans', sans-serif;font-size:10px;line-height:10px;color:#3a3a3a;-webkit-text-stroke:0.15px #3a3a3a;left:-0.50px;width:19.00px;text-align:center;">14</div><div class="t" style="top:394.94px;font-family:'Liberation Sans', sans-serif;font-size:10px;line-height:10px;color:#3a3a3a;-webkit-text-stroke:0.15px #3a3a3a;left:-0.50px;width:19.00px;text-align:center;">15</div><div class="t" style="top:408.94px;font-family:'Liberation Sans', sans-serif;font-size:10px;line-height:10px;color:#3a3a3a;-webkit-text-stroke:0.15px #3a3a3a;left:-0.50px;width:19.00px;text-align:center;">16</div><div class="t" style="top:422.14px;font-family:'Liberation Sans', sans-serif;font-size:10px;line-height:10px;color:#3a3a3a;-webkit-text-stroke:0.15px #3a3a3a;left:-0.50px;width:19.00px;text-align:center;">17</div><div class="t" style="top:451.44px;font-family:'Liberation Sans', sans-serif;font-size:10px;line-height:10px;color:#3a3a3a;-webkit-text-stroke:0.15px #3a3a3a;left:-0.50px;width:19.00px;text-align:center;">18</div><div class="t" style="top:465.17px;font-family:'Liberation Sans', sans-serif;font-size:10px;line-height:10px;color:#3a3a3a;-webkit-text-stroke:0.15px #3a3a3a;left:-0.50px;width:19.00px;text-align:center;">19</div><div class="t" style="top:478.91px;font-family:'Liberation Sans', sans-serif;font-size:10px;line-height:10px;color:#3a3a3a;-webkit-text-stroke:0.15px #3a3a3a;left:-0.50px;width:19.00px;text-align:center;">20</div><div class="t" style="top:492.64px;font-family:'Liberation Sans', sans-serif;font-size:10px;line-height:10px;color:#3a3a3a;-webkit-text-stroke:0.15px #3a3a3a;left:-0.50px;width:19.00px;text-align:center;">21</div><div class="t" style="top:506.38px;font-family:'Liberation Sans', sans-serif;font-size:10px;line-height:10px;color:#3a3a3a;-webkit-text-stroke:0.15px #3a3a3a;left:-0.50px;width:19.00px;text-align:center;">22</div><div class="t" style="top:520.12px;font-family:'Liberation Sans', sans-serif;font-size:10px;line-height:10px;color:#3a3a3a;-webkit-text-stroke:0.15px #3a3a3a;left:-0.50px;width:19.00px;text-align:center;">23</div><div class="t" style="top:533.85px;font-family:'Liberation Sans', sans-serif;font-size:10px;line-height:10px;color:#3a3a3a;-webkit-text-stroke:0.15px #3a3a3a;left:-0.50px;width:19.00px;text-align:center;">24</div><div class="t" style="top:547.59px;font-family:'Liberation Sans', sans-serif;font-size:10px;line-height:10px;color:#3a3a3a;-webkit-text-stroke:0.15px #3a3a3a;left:-0.50px;width:19.00px;text-align:center;">25</div><div class="t" style="top:561.32px;font-family:'Liberation Sans', sans-serif;font-size:10px;line-height:10px;color:#3a3a3a;-webkit-text-stroke:0.15px #3a3a3a;left:-0.50px;width:19.00px;text-align:center;">26</div><div class="t" style="top:575.06px;font-family:'Liberation Sans', sans-serif;font-size:10px;line-height:10px;color:#3a3a3a;-webkit-text-stroke:0.15px #3a3a3a;left:-0.50px;width:19.00px;text-align:center;">27</div><div class="t" style="top:588.80px;font-family:'Liberation Sans', sans-serif;font-size:10px;line-height:10px;color:#3a3a3a;-webkit-text-stroke:0.15px #3a3a3a;left:-0.50px;width:19.00px;text-align:center;">28</div><div class="t" style="top:602.53px;font-family:'Liberation Sans', sans-serif;font-size:10px;line-height:10px;color:#3a3a3a;-webkit-text-stroke:0.15px #3a3a3a;left:-0.50px;width:19.00px;text-align:center;">29</div><div class="t" style="top:616.27px;font-family:'Liberation Sans', sans-serif;font-size:10px;line-height:10px;color:#3a3a3a;-webkit-text-stroke:0.15px #3a3a3a;left:-0.50px;width:19.00px;text-align:center;">30</div><div class="t" style="top:630.00px;font-family:'Liberation Sans', sans-serif;font-size:10px;line-height:10px;color:#3a3a3a;-webkit-text-stroke:0.15px #3a3a3a;left:-0.50px;width:19.00px;text-align:center;">31</div><div class="t" style="top:643.74px;font-family:'Liberation Sans', sans-serif;font-size:10px;line-height:10px;color:#3a3a3a;-webkit-text-stroke:0.15px #3a3a3a;left:-0.50px;width:19.00px;text-align:center;">32</div><div class="t" style="top:657.48px;font-family:'Liberation Sans', sans-serif;font-size:10px;line-height:10px;color:#3a3a3a;-webkit-text-stroke:0.15px #3a3a3a;left:-0.50px;width:19.00px;text-align:center;">33</div><div class="t" style="top:671.21px;font-family:'Liberation Sans', sans-serif;font-size:10px;line-height:10px;color:#3a3a3a;-webkit-text-stroke:0.15px #3a3a3a;left:-0.50px;width:19.00px;text-align:center;">34</div><div class="t" style="top:684.95px;font-family:'Liberation Sans', sans-serif;font-size:10px;line-height:10px;color:#3a3a3a;-webkit-text-stroke:0.15px #3a3a3a;left:-0.50px;width:19.00px;text-align:center;">35</div><div class="t" style="top:698.68px;font-family:'Liberation Sans', sans-serif;font-size:10px;line-height:10px;color:#3a3a3a;-webkit-text-stroke:0.15px #3a3a3a;left:-0.50px;width:19.00px;text-align:center;">36</div><div class="t" style="top:712.42px;font-family:'Liberation Sans', sans-serif;font-size:10px;line-height:10px;color:#3a3a3a;-webkit-text-stroke:0.15px #3a3a3a;left:-0.50px;width:19.00px;text-align:center;">37</div><div class="t" style="top:726.15px;font-family:'Liberation Sans', sans-serif;font-size:10px;line-height:10px;color:#3a3a3a;-webkit-text-stroke:0.15px #3a3a3a;left:-0.50px;width:19.00px;text-align:center;">38</div><div class="t" style="top:739.89px;font-family:'Liberation Sans', sans-serif;font-size:10px;line-height:10px;color:#3a3a3a;-webkit-text-stroke:0.15px #3a3a3a;left:-0.50px;width:19.00px;text-align:center;">39</div><div class="t" style="top:753.63px;font-family:'Liberation Sans', sans-serif;font-size:10px;line-height:10px;color:#2f7d4f;-webkit-text-stroke:0.15px #2f7d4f;left:-0.50px;width:19.00px;text-align:center;">40</div><div class="t" style="top:767.36px;font-family:'Liberation Sans', sans-serif;font-size:10px;line-height:10px;color:#3a3a3a;-webkit-text-stroke:0.15px #3a3a3a;left:-0.50px;width:19.00px;text-align:center;">41</div><div class="t" style="top:781.10px;font-family:'Liberation Sans', sans-serif;font-size:10px;line-height:10px;color:#3a3a3a;-webkit-text-stroke:0.15px #3a3a3a;left:-0.50px;width:19.00px;text-align:center;">42</div><div class="t" style="top:794.84px;font-family:'Liberation Sans', sans-serif;font-size:10px;line-height:10px;color:#3a3a3a;-webkit-text-stroke:0.15px #3a3a3a;left:-0.50px;width:19.00px;text-align:center;">43</div><div class="t" style="top:808.57px;font-family:'Liberation Sans', sans-serif;font-size:10px;line-height:10px;color:#3a3a3a;-webkit-text-stroke:0.15px #3a3a3a;left:-0.50px;width:19.00px;text-align:center;">44</div><div class="t" style="top:822.31px;font-family:'Liberation Sans', sans-serif;font-size:10px;line-height:10px;color:#3a3a3a;-webkit-text-stroke:0.15px #3a3a3a;left:-0.50px;width:19.00px;text-align:center;">45</div><div class="t" style="top:836.04px;font-family:'Liberation Sans', sans-serif;font-size:10px;line-height:10px;color:#3a3a3a;-webkit-text-stroke:0.15px #3a3a3a;left:-0.50px;width:19.00px;text-align:center;">46</div><div class="t" style="top:849.78px;font-family:'Liberation Sans', sans-serif;font-size:10px;line-height:10px;color:#3a3a3a;-webkit-text-stroke:0.15px #3a3a3a;left:-0.50px;width:19.00px;text-align:center;">47</div><div class="t" style="top:863.52px;font-family:'Liberation Sans', sans-serif;font-size:10px;line-height:10px;color:#3a3a3a;-webkit-text-stroke:0.15px #3a3a3a;left:-0.50px;width:19.00px;text-align:center;">48</div><div class="t" style="top:877.25px;font-family:'Liberation Sans', sans-serif;font-size:10px;line-height:10px;color:#3a3a3a;-webkit-text-stroke:0.15px #3a3a3a;left:-0.50px;width:19.00px;text-align:center;">49</div><div class="t" style="top:890.99px;font-family:'Liberation Sans', sans-serif;font-size:10px;line-height:10px;color:#3a3a3a;-webkit-text-stroke:0.15px #3a3a3a;left:-0.50px;width:19.00px;text-align:center;">50</div><div class="t" style="top:904.72px;font-family:'Liberation Sans', sans-serif;font-size:10px;line-height:10px;color:#3a3a3a;-webkit-text-stroke:0.15px #3a3a3a;left:-0.50px;width:19.00px;text-align:center;">51</div><div class="t" style="top:918.46px;font-family:'Liberation Sans', sans-serif;font-size:10px;line-height:10px;color:#3a3a3a;-webkit-text-stroke:0.15px #3a3a3a;left:-0.50px;width:19.00px;text-align:center;">52</div><div class="t" style="top:932.20px;font-family:'Liberation Sans', sans-serif;font-size:10px;line-height:10px;color:#3a3a3a;-webkit-text-stroke:0.15px #3a3a3a;left:-0.50px;width:19.00px;text-align:center;">53</div><div class="t" style="top:942.27px;font-family:'Liberation Sans', sans-serif;font-size:8.3px;line-height:8.3px;color:#1e1e1e;-webkit-text-stroke:0.15px #1e1e1e;left:40.00px;width:57.50px;text-align:center;-webkit-text-stroke:0.25px #1e1e1e;"><span style="display:inline-block;transform:scaleX(1.0097);transform-origin:center">Read Me</span></div><div class="t" style="top:942.27px;font-family:'Liberation Sans', sans-serif;font-size:8.3px;line-height:8.3px;color:#1e1e1e;-webkit-text-stroke:0.15px #1e1e1e;left:97.50px;width:53.50px;text-align:center;-webkit-text-stroke:0.25px #1e1e1e;"><span style="display:inline-block;transform:scaleX(1.0605);transform-origin:center">Setup</span></div><div class="t" style="top:942.27px;font-family:'Liberation Sans', sans-serif;font-size:8.3px;line-height:8.3px;color:#3d7a50;-webkit-text-stroke:0.15px #3d7a50;left:151.00px;width:64.20px;text-align:center;-webkit-text-stroke:0.25px #3d7a50;"><span style="display:inline-block;transform:scaleX(1.0653);transform-origin:center">Guest List</span></div><div class="t" style="top:942.27px;font-family:'Liberation Sans', sans-serif;font-size:8.3px;line-height:8.3px;color:#1e1e1e;-webkit-text-stroke:0.15px #1e1e1e;left:215.20px;width:72.80px;text-align:center;-webkit-text-stroke:0.25px #1e1e1e;"><span style="display:inline-block;transform:scaleX(1.0263);transform-origin:center">Seating Plan</span></div><div class="t" style="top:942.27px;font-family:'Liberation Sans', sans-serif;font-size:8.3px;line-height:8.3px;color:#1e1e1e;-webkit-text-stroke:0.15px #1e1e1e;left:290.00px;width:51.00px;text-align:center;-webkit-text-stroke:0.25px #1e1e1e;"><span style="display:inline-block;transform:scaleX(1.0648);transform-origin:center">Budget</span></div><div class="t" style="top:942.27px;font-family:'Liberation Sans', sans-serif;font-size:8.3px;line-height:8.3px;color:#1e1e1e;-webkit-text-stroke:0.15px #1e1e1e;left:341.00px;width:64.00px;text-align:center;-webkit-text-stroke:0.25px #1e1e1e;"><span style="display:inline-block;transform:scaleX(1.0439);transform-origin:center">To-Do List</span></div><div class="t" style="top:942.27px;font-family:'Liberation Sans', sans-serif;font-size:8.3px;line-height:8.3px;color:#1e1e1e;-webkit-text-stroke:0.15px #1e1e1e;left:405.00px;width:116.00px;text-align:center;-webkit-text-stroke:0.25px #1e1e1e;"><span style="display:inline-block;transform:scaleX(1.0338);transform-origin:center">Wedding Days Itinerary</span></div><div class="t" style="top:942.27px;font-family:'Liberation Sans', sans-serif;font-size:8.3px;line-height:8.3px;color:#6a6a6a;-webkit-text-stroke:0.15px #6a6a6a;left:521.00px;width:151.00px;text-align:center;-webkit-text-stroke:0.25px #6a6a6a;"><span style="display:inline-block;transform:scaleX(1.0255);transform-origin:center">Use these tabs for Research -&gt;</span></div><div class="t" style="top:942.27px;font-family:'Liberation Sans', sans-serif;font-size:8.3px;line-height:8.3px;color:#1e1e1e;-webkit-text-stroke:0.15px #1e1e1e;left:672.00px;width:98.00px;text-align:center;-webkit-text-stroke:0.25px #1e1e1e;"><span style="display:inline-block;transform:scaleX(1.0343);transform-origin:center">Venue Comparison</span></div><div class="t" style="top:942.27px;font-family:'Liberation Sans', sans-serif;font-size:8.3px;line-height:8.3px;color:#1e1e1e;-webkit-text-stroke:0.15px #1e1e1e;left:770.00px;width:61.00px;text-align:center;-webkit-text-stroke:0.25px #1e1e1e;"><span style="display:inline-block;transform:scaleX(0.9292);transform-origin:center">Ideas List</span></div></body></html>
